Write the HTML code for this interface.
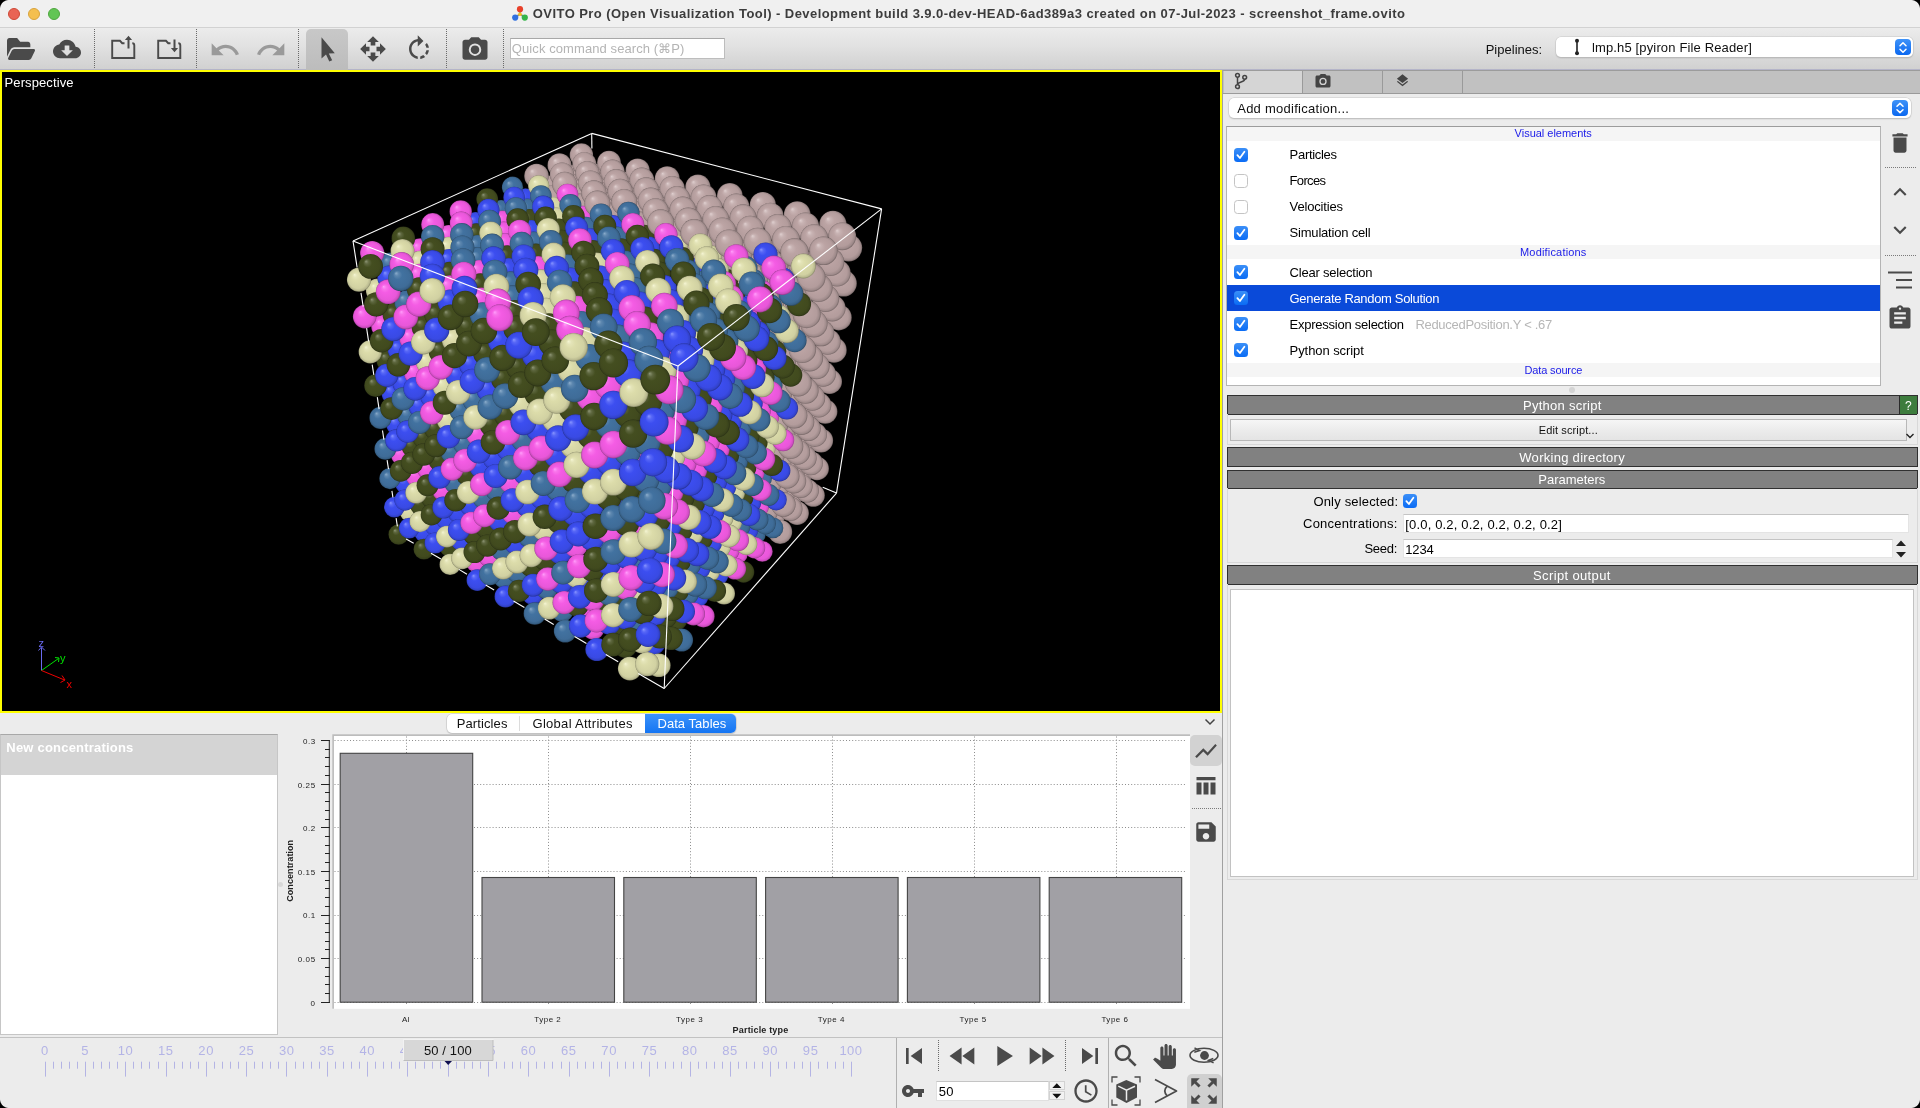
<!DOCTYPE html>
<html><head><meta charset="utf-8"><title>OVITO</title>
<style>
*{box-sizing:border-box;margin:0;padding:0}
html,body{width:1920px;height:1108px;overflow:hidden;background:#ececec;font-family:"Liberation Sans",sans-serif;font-size:13px;color:#000}
.a{position:absolute}
.t{position:absolute;white-space:nowrap;line-height:1}
#titlebar{left:0;top:0;width:1920px;height:28px;background:#f0f0f0;border-bottom:1px solid #d2d2d2}
#toolbar{left:0;top:29px;width:1920px;height:41px;background:linear-gradient(#ebebeb,#e2e2e2 40%,#d0d0d0);}
.vsep{position:absolute;width:1px;background:repeating-linear-gradient(#6a6a6a 0 1px,transparent 1px 2px)}
.hsep{position:absolute;height:1px;background:repeating-linear-gradient(90deg,#7a7a7a 0 1px,transparent 1px 2px)}
#vp{left:0;top:70px;width:1222px;height:643px;background:#000;border:2px solid #ffff00}
.hdr{position:absolute;background:#808080;border:1px solid #3c3c3c;color:#fff;text-align:center;font-size:13px;line-height:17px;height:19px}
.cb{position:absolute;width:14px;height:14px;border-radius:3.5px}
.cb.on{background:linear-gradient(#3b8ff7,#0a6cf5)}
.cb.off{background:#fff;border:1px solid #c4c4c4}
.row{position:absolute;left:1227px;width:653px;height:26px}
.rowt{position:absolute;left:1289px;font-size:13px;line-height:1;white-space:nowrap}
.lh{position:absolute;left:1227px;width:653px;height:14px;background:#f4f4f4;color:#1414e6;font-size:11px;text-align:center;line-height:14px}
</style></head><body>
<div id="wrap" style="position:absolute;left:0;top:0;width:1920px;height:1108px;will-change:transform"><div id="titlebar" class="a"></div>
<div class="a" style="left:8px;top:8px;width:12px;height:12px;border-radius:6px;background:#e96455;border:.5px solid #cf4936"></div>
<div class="a" style="left:28px;top:8px;width:12px;height:12px;border-radius:6px;background:#f4bf4f;border:.5px solid #d9a33c"></div>
<div class="a" style="left:48px;top:8px;width:12px;height:12px;border-radius:6px;background:#61c554;border:.5px solid #4fa73f"></div>
<svg class="a" style="left:511px;top:5px" width="18" height="18" viewBox="0 0 18 18"><path d="M9 9L9 4M9 9L4.2 12.5M9 9L14 12.5" stroke="#888" stroke-width="1.6"/><circle cx="9" cy="4.2" r="3.1" fill="#e8402a"/><circle cx="4.2" cy="12.6" r="3.1" fill="#2f6fe0"/><circle cx="13.8" cy="12.6" r="3.1" fill="#35b54a"/><circle cx="9" cy="9.2" r="1.8" fill="#f0c020"/></svg>
<div id="toolbar" class="a"></div>
<div class="a" style="left:0;top:69px;width:1920px;height:1px;background:#b4b4c8"></div>
<div class="a" style="left:306px;top:29px;width:42px;height:41px;background:linear-gradient(#c8c8c8,#bcbcbc);border-radius:5px 5px 0 0"></div>
<div class="vsep" style="left:94px;top:29px;height:40px"></div>
<div class="vsep" style="left:196px;top:29px;height:40px"></div>
<div class="vsep" style="left:298px;top:29px;height:40px"></div>
<div class="vsep" style="left:446px;top:29px;height:40px"></div>
<div class="vsep" style="left:503px;top:29px;height:40px"></div>
<!-- folder open -->
<svg class="a" style="left:7px;top:38px" width="28" height="22" viewBox="0 64 576 384" preserveAspectRatio="none"><path fill="#4a4a4a" d="M572.694 292.093L500.27 416.248A63.997 63.997 0 0 1 444.989 448H45.025c-18.523 0-30.064-20.093-20.731-36.093l72.424-124.155A64 64 0 0 1 152 256h399.964c18.523 0 30.064 20.093 20.73 36.093zM152 224h328v-48c0-26.51-21.49-48-48-48H272l-64-64H48C21.49 64 0 85.49 0 112v278.046l69.077-118.418C86.214 242.25 117.989 224 152 224z"/></svg>
<!-- cloud download -->
<svg class="a" style="left:53px;top:35px" width="28" height="28" viewBox="0 0 24 24"><path fill="#4a4a4a" d="M19.35 10.04C18.67 6.59 15.64 4 12 4 9.11 4 6.6 5.64 5.35 8.04 2.34 8.36 0 10.91 0 14c0 3.31 2.69 6 6 6h13c2.76 0 5-2.24 5-5 0-2.64-2.05-4.78-4.65-4.96zM17 13l-5 5-5-5h3V9h4v4h3z"/></svg>
<!-- export folder (arrow up) -->
<svg class="a" style="left:110px;top:35px" width="26" height="26" viewBox="0 0 26 26"><path fill="none" stroke="#4a4a4a" stroke-width="1.9" d="M14.5 8.2H12.2L10 5.8H2.2V23H24.3V10.5C24.3 9 23.5 8.2 22.3 8.2"/><path fill="#4a4a4a" d="M17.5 13.5V5h-2.6L18.5 0.8 22.1 5h-2.6v8.5z"/></svg>
<!-- import folder (arrow down) -->
<svg class="a" style="left:156px;top:35px" width="26" height="26" viewBox="0 0 26 26"><path fill="none" stroke="#4a4a4a" stroke-width="1.9" d="M14.5 8.2H12.2L10 5.8H2.2V23H24.3V10.5C24.3 9 23.5 8.2 22.3 8.2"/><path fill="#4a4a4a" d="M17.5 4.5V13h-2.6L18.5 17.2 22.1 13h-2.6V4.5z"/></svg>
<!-- undo / redo -->
<svg class="a" style="left:209px;top:34px" width="32" height="32" viewBox="0 0 24 24"><path fill="#9a9a9a" d="M12.5 8c-2.65 0-5.05.99-6.9 2.6L2 7v9h9l-3.62-3.62c1.39-1.16 3.16-1.88 5.12-1.88 3.54 0 6.55 2.31 7.6 5.5l2.37-.78C21.08 11.03 17.15 8 12.5 8z"/></svg>
<svg class="a" style="left:255px;top:34px" width="32" height="32" viewBox="0 0 24 24"><path fill="#9a9a9a" d="M18.4 10.6C16.55 8.99 14.15 8 11.5 8c-4.65 0-8.58 3.03-9.96 7.22L3.9 16c1.05-3.19 4.05-5.5 7.6-5.5 1.95 0 3.73.72 5.12 1.88L13 16h9V7l-3.6 3.6z"/></svg>
<!-- pointer -->
<svg class="a" style="left:318px;top:36px" width="20" height="26" viewBox="0 0 20 26"><path fill="#4a4a4a" d="M3.5 1.2L16.8 17.2 10.8 17.4 14.2 24.2 11.3 25.6 8 18.6 3.5 22.4z"/></svg>
<!-- move -->
<svg class="a" style="left:359px;top:35px" width="28" height="28" viewBox="0 0 24 24"><path fill="#4a4a4a" d="M10 9h4V6h3l-5-5-5 5h3v3zm-1 1H6V7l-5 5 5 5v-3h3v-4zm14 2l-5-5v3h-3v4h3v3l5-5zm-9 3h-4v3H7l5 5 5-5h-3v-3z"/></svg>
<!-- rotate -->
<svg class="a" style="left:404px;top:34px" width="30" height="30" viewBox="0 0 24 24"><path fill="#4a4a4a" d="M15.55 5.55L11 1v3.07C7.06 4.56 4 7.92 4 12s3.05 7.44 7 7.93v-2.02c-2.84-.48-5-2.94-5-5.910s2.16-5.43 5-5.91V10l4.55-4.45zM19.930 11c-.17-1.39-.72-2.73-1.62-3.890l-1.42 1.420c.54.75.88 1.600 1.020 2.470h2.020zM13 17.900v2.020c1.390-.17 2.740-.71 3.900-1.610l-1.440-1.440c-.75.54-1.590.89-2.460 1.030zm3.890-2.420l1.420 1.410c.9-1.160 1.450-2.500 1.620-3.890h-2.020c-.14.870-.48 1.720-1.020 2.480z"/></svg>
<!-- camera -->
<svg class="a" style="left:460px;top:34px" width="30" height="30" viewBox="0 0 24 24"><path fill="#4a4a4a" d="M9 2.500L7.170 4.500H4c-1.100 0-2 .9-2 2v12c0 1.100.9 2 2 2h16c1.100 0 2-.9 2-2v-12c0-1.100-.9-2-2-2h-3.170L15 2.500H9z"/><circle cx="12" cy="12.500" r="4.200" fill="none" stroke="#e0e0e0" stroke-width="1.600"/></svg>
<!-- quick search -->
<div class="a" style="left:510px;top:38px;width:215px;height:21px;background:#fff;border:1px solid #bdbdbd;border-top-color:#a8a8a8"></div>
<!-- pipelines -->
<div class="a" style="left:1555.5px;top:37px;width:357.5px;height:20px;background:#fff;border-radius:5px;box-shadow:0 0 0 .5px #c8c8c8,0 1px 1.5px rgba(0,0,0,.25)"></div>
<div class="a" style="left:1895px;top:39px;width:16px;height:16px;border-radius:4px;background:linear-gradient(#3f93f8,#0b68f0)"></div>
<svg class="a" style="left:1895px;top:38.5px" width="16" height="17" viewBox="0 0 16 17"><path d="M5 6.800L8 3.800 11 6.800M5 10.200L8 13.200 11 10.200" stroke="#fff" stroke-width="1.500" fill="none" stroke-linecap="round" stroke-linejoin="round"/></svg>
<svg class="a" style="left:1570px;top:38px" width="14" height="18" viewBox="0 0 14 18"><path d="M7 2.500V15.500" stroke="#222" stroke-width="1.600"/><circle cx="7" cy="2.800" r="2" fill="#222"/><circle cx="7" cy="15.300" r="2" fill="#222"/></svg>
<div id="title" class="t" style="left:532.80px;top:7.38px;font-size:13px;color:#3c3c3c;letter-spacing:0.437px;font-weight:bold">OVITO Pro (Open Visualization Tool) - Development build 3.9.0-dev-HEAD-6ad389a3 created on 07-Jul-2023 - screenshot_frame.ovito</div><div id="qs" class="t" style="left:511.80px;top:42.48px;font-size:13px;color:#b4b4b4;letter-spacing:0.090px">Quick command search (⌘P)</div><div id="pl" class="t" style="left:1485.70px;top:43.08px;font-size:13px;color:#111;letter-spacing:0.014px">Pipelines:</div><div id="plt" class="t" style="left:1591.90px;top:41.48px;font-size:13px;color:#111;letter-spacing:0.149px">lmp.h5 [pyiron File Reader]</div><div id="vp" class="a"></div><svg style="position:absolute;left:2px;top:72px" width="1218" height="639" viewBox="2 72 1218 639"><defs><radialGradient id="g0" cx=".5" cy=".5" r=".5" fx=".31" fy=".29"><stop offset="0" stop-color="#dfcfcf"/><stop offset=".16" stop-color="#c8b3b3"/><stop offset=".36" stop-color="#bca4a4"/><stop offset=".8" stop-color="#b39c9c"/><stop offset=".93" stop-color="#9e8a8a"/><stop offset="1" stop-color="#756666"/></radialGradient><radialGradient id="g1" cx=".5" cy=".5" r=".5" fx=".31" fy=".29"><stop offset="0" stop-color="#8895ff"/><stop offset=".16" stop-color="#5767f6"/><stop offset=".36" stop-color="#3c4ef0"/><stop offset=".8" stop-color="#394ae4"/><stop offset=".93" stop-color="#3242ca"/><stop offset="1" stop-color="#253095"/></radialGradient><radialGradient id="g2" cx=".5" cy=".5" r=".5" fx=".31" fy=".29"><stop offset="0" stop-color="#8cadcc"/><stop offset=".16" stop-color="#5d87af"/><stop offset=".36" stop-color="#4272a0"/><stop offset=".8" stop-color="#3f6c98"/><stop offset=".93" stop-color="#376086"/><stop offset="1" stop-color="#294763"/></radialGradient><radialGradient id="g3" cx=".5" cy=".5" r=".5" fx=".31" fy=".29"><stop offset="0" stop-color="#ff9efb"/><stop offset=".16" stop-color="#f974eb"/><stop offset=".36" stop-color="#f45ce4"/><stop offset=".8" stop-color="#e857d9"/><stop offset=".93" stop-color="#cd4dc0"/><stop offset="1" stop-color="#97398d"/></radialGradient><radialGradient id="g4" cx=".5" cy=".5" r=".5" fx=".31" fy=".29"><stop offset="0" stop-color="#8e9575"/><stop offset=".16" stop-color="#5e673f"/><stop offset=".36" stop-color="#444e20"/><stop offset=".8" stop-color="#414a1e"/><stop offset=".93" stop-color="#39421b"/><stop offset="1" stop-color="#2a3014"/></radialGradient><radialGradient id="g5" cx=".5" cy=".5" r=".5" fx=".31" fy=".29"><stop offset="0" stop-color="#f5f5d3"/><stop offset=".16" stop-color="#e4e4b8"/><stop offset=".36" stop-color="#dcdcaa"/><stop offset=".8" stop-color="#d1d1a2"/><stop offset=".93" stop-color="#b9b98f"/><stop offset="1" stop-color="#888869"/></radialGradient></defs><circle cx="813.3" cy="495.3" r="11.5" fill="url(#g0)"/><circle cx="799.9" cy="475.6" r="11.5" fill="url(#g0)"/><circle cx="790.0" cy="497.5" r="11.6" fill="url(#g0)"/><circle cx="595.2" cy="175.3" r="11.7" fill="url(#g0)"/><circle cx="581.4" cy="155.0" r="11.7" fill="url(#g0)"/><circle cx="570.9" cy="176.6" r="11.8" fill="url(#g0)"/><circle cx="817.1" cy="468.5" r="11.8" fill="url(#g0)"/><circle cx="803.4" cy="448.4" r="11.8" fill="url(#g0)"/><circle cx="807.1" cy="490.8" r="11.8" fill="url(#g0)"/><circle cx="793.4" cy="470.6" r="11.8" fill="url(#g0)"/><circle cx="797.1" cy="513.1" r="11.8" fill="url(#g0)"/><circle cx="783.3" cy="493.0" r="11.8" fill="url(#g0)"/><circle cx="773.2" cy="515.5" r="11.8" fill="url(#g0)"/><circle cx="623.1" cy="183.3" r="11.9" fill="url(#g0)"/><circle cx="609.0" cy="162.6" r="11.9" fill="url(#g0)"/><circle cx="598.4" cy="184.6" r="12.0" fill="url(#g0)"/><circle cx="584.3" cy="163.9" r="12.0" fill="url(#g0)"/><circle cx="821.1" cy="440.6" r="12.0" fill="url(#g0)"/><circle cx="573.7" cy="186.0" r="12.0" fill="url(#g0)"/><circle cx="807.2" cy="420.1" r="12.0" fill="url(#g0)"/><circle cx="559.5" cy="165.2" r="12.0" fill="url(#g0)"/><circle cx="810.9" cy="463.3" r="12.0" fill="url(#g0)"/><circle cx="796.9" cy="442.7" r="12.0" fill="url(#g0)"/><circle cx="548.7" cy="187.4" r="12.0" fill="url(#g0)"/><circle cx="800.7" cy="486.0" r="12.0" fill="url(#g0)"/><circle cx="786.7" cy="465.5" r="12.0" fill="url(#g0)"/><circle cx="790.4" cy="508.9" r="12.1" fill="url(#g0)"/><circle cx="776.3" cy="488.3" r="12.1" fill="url(#g0)"/><circle cx="780.1" cy="531.8" r="12.1" fill="url(#g0)"/><circle cx="424.2" cy="532.1" r="10.2" fill="url(#g1)"/><circle cx="766.0" cy="511.2" r="12.1" fill="url(#g0)"/><circle cx="409.7" cy="511.5" r="10.2" fill="url(#g5)"/><circle cx="755.6" cy="534.2" r="10.2" fill="url(#g2)"/><circle cx="398.6" cy="534.5" r="10.2" fill="url(#g4)"/><circle cx="651.9" cy="191.5" r="12.1" fill="url(#g0)"/><circle cx="637.6" cy="170.5" r="12.1" fill="url(#g0)"/><circle cx="626.9" cy="192.9" r="12.2" fill="url(#g0)"/><circle cx="612.5" cy="171.8" r="12.2" fill="url(#g0)"/><circle cx="601.8" cy="194.4" r="12.2" fill="url(#g0)"/><circle cx="587.4" cy="173.2" r="12.2" fill="url(#g0)"/><circle cx="825.2" cy="411.6" r="12.2" fill="url(#g0)"/><circle cx="811.0" cy="390.7" r="12.2" fill="url(#g0)"/><circle cx="576.5" cy="195.8" r="12.2" fill="url(#g0)"/><circle cx="814.8" cy="434.7" r="12.2" fill="url(#g0)"/><circle cx="562.0" cy="174.6" r="12.2" fill="url(#g0)"/><circle cx="800.6" cy="413.7" r="12.3" fill="url(#g0)"/><circle cx="804.4" cy="457.9" r="12.3" fill="url(#g0)"/><circle cx="551.1" cy="197.2" r="12.3" fill="url(#g0)"/><circle cx="790.1" cy="436.9" r="12.3" fill="url(#g0)"/><circle cx="536.5" cy="176.0" r="12.3" fill="url(#g0)"/><circle cx="449.8" cy="546.7" r="10.4" fill="url(#g4)"/><circle cx="793.9" cy="481.1" r="12.3" fill="url(#g0)"/><circle cx="435.2" cy="525.7" r="10.4" fill="url(#g1)"/><circle cx="779.6" cy="460.1" r="12.3" fill="url(#g0)"/><circle cx="525.5" cy="198.7" r="10.4" fill="url(#g1)"/><circle cx="783.4" cy="504.5" r="12.3" fill="url(#g0)"/><circle cx="420.4" cy="504.8" r="10.4" fill="url(#g4)"/><circle cx="423.9" cy="549.2" r="10.4" fill="url(#g4)"/><circle cx="769.1" cy="483.4" r="12.3" fill="url(#g0)"/><circle cx="405.7" cy="483.7" r="10.4" fill="url(#g1)"/><circle cx="772.9" cy="527.9" r="10.4" fill="url(#g2)"/><circle cx="409.2" cy="528.2" r="10.4" fill="url(#g1)"/><circle cx="681.7" cy="200.0" r="12.3" fill="url(#g0)"/><circle cx="758.5" cy="506.8" r="10.4" fill="url(#g3)"/><circle cx="394.4" cy="507.1" r="10.4" fill="url(#g1)"/><circle cx="667.2" cy="178.6" r="12.4" fill="url(#g0)"/><circle cx="762.3" cy="551.4" r="10.4" fill="url(#g3)"/><circle cx="747.8" cy="530.3" r="10.4" fill="url(#g1)"/><circle cx="656.4" cy="201.5" r="12.4" fill="url(#g0)"/><circle cx="641.8" cy="180.0" r="12.4" fill="url(#g0)"/><circle cx="737.2" cy="553.9" r="10.5" fill="url(#g3)"/><circle cx="630.9" cy="203.0" r="12.4" fill="url(#g0)"/><circle cx="616.3" cy="181.5" r="12.4" fill="url(#g0)"/><circle cx="605.3" cy="204.5" r="12.5" fill="url(#g0)"/><circle cx="829.5" cy="381.5" r="12.5" fill="url(#g0)"/><circle cx="590.5" cy="182.9" r="12.5" fill="url(#g0)"/><circle cx="818.9" cy="405.0" r="12.5" fill="url(#g0)"/><circle cx="579.5" cy="206.0" r="12.5" fill="url(#g0)"/><circle cx="564.7" cy="184.3" r="12.5" fill="url(#g0)"/><circle cx="476.4" cy="561.8" r="10.6" fill="url(#g3)"/><circle cx="808.3" cy="428.6" r="12.5" fill="url(#g0)"/><circle cx="461.5" cy="540.5" r="10.6" fill="url(#g1)"/><circle cx="793.7" cy="407.1" r="12.5" fill="url(#g0)"/><circle cx="553.5" cy="207.5" r="10.6" fill="url(#g5)"/><circle cx="446.6" cy="519.1" r="10.6" fill="url(#g1)"/><circle cx="797.6" cy="452.2" r="12.5" fill="url(#g0)"/><circle cx="538.7" cy="185.8" r="10.6" fill="url(#g5)"/><circle cx="450.1" cy="564.4" r="10.6" fill="url(#g5)"/><circle cx="431.6" cy="497.7" r="10.6" fill="url(#g4)"/><circle cx="783.0" cy="430.7" r="12.6" fill="url(#g0)"/><circle cx="435.1" cy="543.0" r="10.6" fill="url(#g1)"/><circle cx="786.9" cy="476.0" r="12.6" fill="url(#g0)"/><circle cx="416.5" cy="476.3" r="10.6" fill="url(#g3)"/><circle cx="527.4" cy="209.0" r="10.6" fill="url(#g2)"/><circle cx="420.1" cy="521.6" r="10.6" fill="url(#g5)"/><circle cx="772.3" cy="454.5" r="12.6" fill="url(#g0)"/><circle cx="401.5" cy="454.8" r="10.6" fill="url(#g3)"/><circle cx="697.9" cy="187.1" r="12.6" fill="url(#g0)"/><circle cx="512.5" cy="187.2" r="10.6" fill="url(#g2)"/><circle cx="776.2" cy="499.8" r="10.6" fill="url(#g1)"/><circle cx="405.0" cy="500.1" r="10.6" fill="url(#g1)"/><circle cx="761.4" cy="478.3" r="10.6" fill="url(#g2)"/><circle cx="389.9" cy="478.6" r="10.6" fill="url(#g2)"/><circle cx="687.0" cy="210.4" r="12.6" fill="url(#g0)"/><circle cx="501.1" cy="210.6" r="10.6" fill="url(#g2)"/><circle cx="765.3" cy="523.8" r="10.6" fill="url(#g2)"/><circle cx="672.2" cy="188.6" r="12.6" fill="url(#g0)"/><circle cx="750.6" cy="502.2" r="10.7" fill="url(#g1)"/><circle cx="754.5" cy="547.8" r="10.7" fill="url(#g3)"/><circle cx="661.1" cy="212.0" r="12.6" fill="url(#g0)"/><circle cx="739.7" cy="526.3" r="10.7" fill="url(#g2)"/><circle cx="646.2" cy="190.0" r="12.7" fill="url(#g0)"/><circle cx="743.6" cy="572.0" r="10.7" fill="url(#g4)"/><circle cx="728.8" cy="550.4" r="10.7" fill="url(#g3)"/><circle cx="635.1" cy="213.5" r="12.7" fill="url(#g0)"/><circle cx="620.1" cy="191.5" r="12.7" fill="url(#g0)"/><circle cx="717.8" cy="574.6" r="10.7" fill="url(#g1)"/><circle cx="834.0" cy="350.1" r="12.7" fill="url(#g0)"/><circle cx="608.9" cy="215.1" r="12.7" fill="url(#g0)"/><circle cx="593.9" cy="193.0" r="12.7" fill="url(#g0)"/><circle cx="504.0" cy="577.4" r="10.8" fill="url(#g2)"/><circle cx="823.2" cy="374.0" r="12.7" fill="url(#g0)"/><circle cx="488.8" cy="555.8" r="10.8" fill="url(#g3)"/><circle cx="582.6" cy="216.6" r="10.8" fill="url(#g3)"/><circle cx="473.6" cy="534.0" r="10.8" fill="url(#g4)"/><circle cx="812.4" cy="398.0" r="12.8" fill="url(#g0)"/><circle cx="567.5" cy="194.5" r="10.8" fill="url(#g3)"/><circle cx="477.3" cy="580.1" r="10.8" fill="url(#g1)"/><circle cx="458.4" cy="512.2" r="10.8" fill="url(#g1)"/><circle cx="797.5" cy="376.1" r="12.8" fill="url(#g0)"/><circle cx="462.1" cy="558.4" r="10.8" fill="url(#g5)"/><circle cx="443.1" cy="490.4" r="10.8" fill="url(#g3)"/><circle cx="801.5" cy="422.1" r="12.8" fill="url(#g0)"/><circle cx="744.8" cy="218.1" r="12.8" fill="url(#g0)"/><circle cx="556.1" cy="218.2" r="10.8" fill="url(#g5)"/><circle cx="446.8" cy="536.6" r="10.8" fill="url(#g5)"/><circle cx="427.8" cy="468.5" r="10.8" fill="url(#g3)"/><circle cx="786.6" cy="400.2" r="12.8" fill="url(#g0)"/><circle cx="729.8" cy="195.9" r="12.8" fill="url(#g0)"/><circle cx="540.9" cy="196.0" r="10.8" fill="url(#g2)"/><circle cx="431.5" cy="514.7" r="10.8" fill="url(#g4)"/><circle cx="790.5" cy="446.3" r="12.8" fill="url(#g0)"/><circle cx="412.5" cy="446.6" r="10.8" fill="url(#g4)"/><circle cx="416.1" cy="492.8" r="10.8" fill="url(#g5)"/><circle cx="775.6" cy="424.3" r="12.8" fill="url(#g0)"/><circle cx="397.1" cy="424.6" r="10.8" fill="url(#g1)"/><circle cx="718.7" cy="219.6" r="12.8" fill="url(#g0)"/><circle cx="529.4" cy="219.8" r="10.8" fill="url(#g4)"/><circle cx="779.6" cy="470.6" r="10.8" fill="url(#g1)"/><circle cx="400.7" cy="470.9" r="10.8" fill="url(#g4)"/><circle cx="703.6" cy="197.4" r="12.9" fill="url(#g0)"/><circle cx="514.1" cy="197.5" r="10.8" fill="url(#g1)"/><circle cx="764.6" cy="448.6" r="10.9" fill="url(#g5)"/><circle cx="385.3" cy="448.9" r="10.9" fill="url(#g2)"/><circle cx="768.5" cy="495.0" r="10.9" fill="url(#g2)"/><circle cx="692.4" cy="221.2" r="12.9" fill="url(#g0)"/><circle cx="502.6" cy="221.4" r="10.9" fill="url(#g3)"/><circle cx="753.5" cy="473.0" r="10.9" fill="url(#g3)"/><circle cx="677.3" cy="198.9" r="12.9" fill="url(#g0)"/><circle cx="487.2" cy="199.1" r="10.9" fill="url(#g4)"/><circle cx="757.5" cy="519.5" r="10.9" fill="url(#g2)"/><circle cx="742.4" cy="497.4" r="10.9" fill="url(#g4)"/><circle cx="666.0" cy="222.8" r="12.9" fill="url(#g0)"/><circle cx="475.6" cy="223.0" r="10.9" fill="url(#g1)"/><circle cx="746.4" cy="544.1" r="10.9" fill="url(#g5)"/><circle cx="650.8" cy="200.5" r="12.9" fill="url(#g0)"/><circle cx="559.6" cy="590.9" r="10.9" fill="url(#g4)"/><circle cx="731.2" cy="522.0" r="10.9" fill="url(#g5)"/><circle cx="735.2" cy="568.7" r="10.9" fill="url(#g3)"/><circle cx="639.5" cy="224.5" r="13.0" fill="url(#g0)"/><circle cx="720.0" cy="546.7" r="10.9" fill="url(#g5)"/><circle cx="624.2" cy="202.0" r="13.0" fill="url(#g0)"/><circle cx="724.0" cy="593.5" r="11.0" fill="url(#g5)"/><circle cx="532.6" cy="593.7" r="11.0" fill="url(#g1)"/><circle cx="838.7" cy="317.4" r="13.0" fill="url(#g0)"/><circle cx="708.8" cy="571.5" r="11.0" fill="url(#g5)"/><circle cx="517.2" cy="571.6" r="11.0" fill="url(#g2)"/><circle cx="612.7" cy="226.1" r="11.0" fill="url(#g1)"/><circle cx="501.7" cy="549.5" r="11.0" fill="url(#g2)"/><circle cx="827.7" cy="341.8" r="13.0" fill="url(#g0)"/><circle cx="597.4" cy="203.6" r="13.0" fill="url(#g0)"/><circle cx="697.5" cy="596.3" r="11.0" fill="url(#g1)"/><circle cx="505.5" cy="596.5" r="11.0" fill="url(#g1)"/><circle cx="486.2" cy="527.3" r="11.0" fill="url(#g4)"/><circle cx="490.0" cy="574.3" r="11.0" fill="url(#g2)"/><circle cx="470.7" cy="505.1" r="11.0" fill="url(#g1)"/><circle cx="816.6" cy="366.2" r="13.0" fill="url(#g0)"/><circle cx="585.8" cy="227.7" r="11.0" fill="url(#g2)"/><circle cx="474.5" cy="552.1" r="11.0" fill="url(#g4)"/><circle cx="455.2" cy="482.8" r="11.0" fill="url(#g2)"/><circle cx="801.4" cy="343.8" r="13.1" fill="url(#g0)"/><circle cx="762.8" cy="205.0" r="13.1" fill="url(#g0)"/><circle cx="570.4" cy="205.1" r="11.0" fill="url(#g2)"/><circle cx="458.9" cy="529.9" r="11.0" fill="url(#g1)"/><circle cx="439.6" cy="460.5" r="11.0" fill="url(#g4)"/><circle cx="805.5" cy="390.7" r="13.1" fill="url(#g0)"/><circle cx="443.3" cy="507.6" r="11.0" fill="url(#g1)"/><circle cx="423.9" cy="438.1" r="11.0" fill="url(#g4)"/><circle cx="790.2" cy="368.3" r="13.1" fill="url(#g0)"/><circle cx="558.7" cy="229.4" r="11.0" fill="url(#g4)"/><circle cx="427.6" cy="485.3" r="11.0" fill="url(#g4)"/><circle cx="794.3" cy="415.4" r="13.1" fill="url(#g0)"/><circle cx="408.3" cy="415.7" r="11.0" fill="url(#g2)"/><circle cx="775.0" cy="345.8" r="13.1" fill="url(#g0)"/><circle cx="736.3" cy="206.6" r="13.1" fill="url(#g0)"/><circle cx="543.2" cy="206.7" r="11.1" fill="url(#g1)"/><circle cx="412.0" cy="462.9" r="11.1" fill="url(#g4)"/><circle cx="779.0" cy="392.9" r="13.1" fill="url(#g0)"/><circle cx="392.6" cy="393.2" r="11.1" fill="url(#g1)"/><circle cx="783.1" cy="440.1" r="11.1" fill="url(#g3)"/><circle cx="396.3" cy="440.4" r="11.1" fill="url(#g1)"/><circle cx="725.0" cy="230.9" r="13.1" fill="url(#g0)"/><circle cx="531.5" cy="231.0" r="11.1" fill="url(#g1)"/><circle cx="767.8" cy="417.6" r="11.1" fill="url(#g3)"/><circle cx="380.5" cy="417.9" r="11.1" fill="url(#g2)"/><circle cx="709.6" cy="208.2" r="13.1" fill="url(#g0)"/><circle cx="515.9" cy="208.3" r="11.1" fill="url(#g2)"/><circle cx="771.9" cy="465.0" r="11.1" fill="url(#g4)"/><circle cx="756.5" cy="442.5" r="11.1" fill="url(#g4)"/><circle cx="698.2" cy="232.6" r="13.2" fill="url(#g0)"/><circle cx="504.0" cy="232.7" r="11.1" fill="url(#g3)"/><circle cx="760.6" cy="489.9" r="11.1" fill="url(#g3)"/><circle cx="682.7" cy="209.8" r="13.2" fill="url(#g0)"/><circle cx="488.4" cy="209.9" r="11.1" fill="url(#g1)"/><circle cx="589.7" cy="607.7" r="11.1" fill="url(#g3)"/><circle cx="745.2" cy="467.4" r="11.1" fill="url(#g4)"/><circle cx="686.7" cy="257.1" r="13.2" fill="url(#g0)"/><circle cx="574.1" cy="585.3" r="11.1" fill="url(#g1)"/><circle cx="749.2" cy="515.0" r="11.1" fill="url(#g1)"/><circle cx="671.2" cy="234.2" r="13.2" fill="url(#g0)"/><circle cx="476.4" cy="234.4" r="11.1" fill="url(#g4)"/><circle cx="733.8" cy="492.4" r="11.2" fill="url(#g5)"/><circle cx="655.6" cy="211.4" r="13.2" fill="url(#g0)"/><circle cx="460.7" cy="211.5" r="11.2" fill="url(#g3)"/><circle cx="562.3" cy="610.6" r="11.2" fill="url(#g2)"/><circle cx="737.8" cy="540.1" r="11.2" fill="url(#g3)"/><circle cx="546.7" cy="588.1" r="11.2" fill="url(#g2)"/><circle cx="722.3" cy="517.5" r="11.2" fill="url(#g5)"/><circle cx="644.0" cy="235.9" r="11.2" fill="url(#g4)"/><circle cx="448.7" cy="236.1" r="11.2" fill="url(#g3)"/><circle cx="726.4" cy="565.4" r="11.2" fill="url(#g5)"/><circle cx="530.9" cy="565.5" r="11.2" fill="url(#g4)"/><circle cx="843.5" cy="283.3" r="13.3" fill="url(#g0)"/><circle cx="628.4" cy="213.0" r="11.2" fill="url(#g2)"/><circle cx="534.8" cy="613.5" r="11.2" fill="url(#g2)"/><circle cx="710.8" cy="542.8" r="11.2" fill="url(#g1)"/><circle cx="515.2" cy="542.9" r="11.2" fill="url(#g1)"/><circle cx="714.9" cy="590.7" r="11.2" fill="url(#g4)"/><circle cx="519.0" cy="590.9" r="11.2" fill="url(#g4)"/><circle cx="499.4" cy="520.3" r="11.2" fill="url(#g1)"/><circle cx="832.3" cy="308.1" r="13.3" fill="url(#g0)"/><circle cx="616.7" cy="237.6" r="11.2" fill="url(#g2)"/><circle cx="699.3" cy="568.1" r="11.2" fill="url(#g1)"/><circle cx="503.2" cy="568.3" r="11.2" fill="url(#g5)"/><circle cx="483.5" cy="497.6" r="11.2" fill="url(#g2)"/><circle cx="797.2" cy="214.5" r="13.3" fill="url(#g0)"/><circle cx="601.0" cy="214.6" r="11.2" fill="url(#g2)"/><circle cx="703.4" cy="616.2" r="11.2" fill="url(#g3)"/><circle cx="487.4" cy="545.6" r="11.2" fill="url(#g4)"/><circle cx="467.7" cy="474.9" r="11.2" fill="url(#g4)"/><circle cx="821.0" cy="333.0" r="13.3" fill="url(#g0)"/><circle cx="687.7" cy="593.6" r="11.2" fill="url(#g2)"/><circle cx="471.5" cy="522.9" r="11.2" fill="url(#g3)"/><circle cx="451.8" cy="452.1" r="11.3" fill="url(#g2)"/><circle cx="589.2" cy="239.3" r="11.3" fill="url(#g1)"/><circle cx="455.6" cy="500.2" r="11.3" fill="url(#g4)"/><circle cx="435.8" cy="429.3" r="11.3" fill="url(#g4)"/><circle cx="809.7" cy="358.0" r="13.4" fill="url(#g0)"/><circle cx="770.2" cy="216.1" r="13.4" fill="url(#g0)"/><circle cx="573.4" cy="216.2" r="11.3" fill="url(#g4)"/><circle cx="676.1" cy="619.2" r="11.3" fill="url(#g4)"/><circle cx="439.6" cy="477.4" r="11.3" fill="url(#g1)"/><circle cx="419.9" cy="406.4" r="11.3" fill="url(#g1)"/><circle cx="794.1" cy="335.0" r="13.4" fill="url(#g0)"/><circle cx="423.7" cy="454.5" r="11.3" fill="url(#g4)"/><circle cx="798.3" cy="383.1" r="13.4" fill="url(#g0)"/><circle cx="403.9" cy="383.4" r="11.3" fill="url(#g1)"/><circle cx="778.5" cy="312.0" r="13.4" fill="url(#g0)"/><circle cx="561.5" cy="241.1" r="11.3" fill="url(#g4)"/><circle cx="407.6" cy="431.6" r="11.3" fill="url(#g1)"/><circle cx="782.7" cy="360.1" r="13.4" fill="url(#g0)"/><circle cx="387.8" cy="360.4" r="11.3" fill="url(#g4)"/><circle cx="762.9" cy="288.9" r="13.4" fill="url(#g0)"/><circle cx="743.1" cy="217.7" r="13.4" fill="url(#g0)"/><circle cx="545.6" cy="217.9" r="11.3" fill="url(#g4)"/><circle cx="786.8" cy="408.3" r="11.3" fill="url(#g1)"/><circle cx="391.6" cy="408.6" r="11.3" fill="url(#g4)"/><circle cx="767.0" cy="337.1" r="13.4" fill="url(#g0)"/><circle cx="747.2" cy="265.8" r="13.4" fill="url(#g0)"/><circle cx="771.2" cy="385.3" r="11.3" fill="url(#g2)"/><circle cx="375.5" cy="385.6" r="11.3" fill="url(#g4)"/><circle cx="731.5" cy="242.6" r="13.4" fill="url(#g0)"/><circle cx="533.6" cy="242.8" r="11.3" fill="url(#g2)"/><circle cx="775.3" cy="433.6" r="11.3" fill="url(#g5)"/><circle cx="735.7" cy="290.8" r="13.4" fill="url(#g0)"/><circle cx="715.8" cy="219.4" r="13.4" fill="url(#g0)"/><circle cx="517.7" cy="219.6" r="11.3" fill="url(#g4)"/><circle cx="621.0" cy="625.1" r="11.3" fill="url(#g4)"/><circle cx="759.6" cy="410.6" r="11.3" fill="url(#g3)"/><circle cx="719.9" cy="267.6" r="13.5" fill="url(#g0)"/><circle cx="605.1" cy="602.3" r="11.4" fill="url(#g4)"/><circle cx="763.8" cy="459.1" r="11.4" fill="url(#g3)"/><circle cx="704.1" cy="244.4" r="13.5" fill="url(#g0)"/><circle cx="505.6" cy="244.5" r="11.4" fill="url(#g3)"/><circle cx="589.2" cy="579.4" r="11.4" fill="url(#g1)"/><circle cx="748.1" cy="436.0" r="11.4" fill="url(#g4)"/><circle cx="688.3" cy="221.1" r="13.5" fill="url(#g0)"/><circle cx="489.6" cy="221.2" r="11.4" fill="url(#g2)"/><circle cx="593.2" cy="628.1" r="11.4" fill="url(#g3)"/><circle cx="752.2" cy="484.6" r="11.4" fill="url(#g2)"/><circle cx="692.4" cy="269.5" r="11.4" fill="url(#g1)"/><circle cx="577.3" cy="605.2" r="11.4" fill="url(#g4)"/><circle cx="736.4" cy="461.5" r="11.4" fill="url(#g2)"/><circle cx="676.6" cy="246.1" r="11.4" fill="url(#g5)"/><circle cx="477.4" cy="246.3" r="11.4" fill="url(#g2)"/><circle cx="561.3" cy="582.2" r="11.4" fill="url(#g1)"/><circle cx="740.6" cy="510.2" r="11.4" fill="url(#g2)"/><circle cx="660.7" cy="222.8" r="13.5" fill="url(#g0)"/><circle cx="461.2" cy="222.9" r="11.4" fill="url(#g3)"/><circle cx="565.2" cy="631.1" r="11.4" fill="url(#g2)"/><circle cx="545.2" cy="559.2" r="11.4" fill="url(#g4)"/><circle cx="724.7" cy="487.1" r="11.4" fill="url(#g1)"/><circle cx="549.2" cy="608.1" r="11.4" fill="url(#g5)"/><circle cx="728.9" cy="536.0" r="11.4" fill="url(#g5)"/><circle cx="529.2" cy="536.1" r="11.4" fill="url(#g2)"/><circle cx="848.6" cy="247.8" r="13.6" fill="url(#g0)"/><circle cx="648.8" cy="247.9" r="11.4" fill="url(#g1)"/><circle cx="448.9" cy="248.1" r="11.4" fill="url(#g5)"/><circle cx="533.1" cy="585.1" r="11.4" fill="url(#g1)"/><circle cx="713.0" cy="512.9" r="11.4" fill="url(#g1)"/><circle cx="513.0" cy="513.0" r="11.4" fill="url(#g3)"/><circle cx="832.9" cy="224.3" r="13.6" fill="url(#g0)"/><circle cx="632.8" cy="224.5" r="11.5" fill="url(#g3)"/><circle cx="432.7" cy="224.6" r="11.5" fill="url(#g3)"/><circle cx="717.2" cy="561.8" r="11.5" fill="url(#g2)"/><circle cx="517.0" cy="562.0" r="11.5" fill="url(#g5)"/><circle cx="496.9" cy="489.9" r="11.5" fill="url(#g2)"/><circle cx="837.1" cy="273.0" r="13.6" fill="url(#g0)"/><circle cx="701.2" cy="538.7" r="11.5" fill="url(#g4)"/><circle cx="500.8" cy="538.9" r="11.5" fill="url(#g4)"/><circle cx="480.7" cy="466.6" r="11.5" fill="url(#g1)"/><circle cx="620.8" cy="249.7" r="11.5" fill="url(#g4)"/><circle cx="420.3" cy="249.8" r="11.5" fill="url(#g3)"/><circle cx="705.4" cy="587.8" r="11.5" fill="url(#g2)"/><circle cx="484.6" cy="515.7" r="11.5" fill="url(#g3)"/><circle cx="464.5" cy="443.4" r="11.5" fill="url(#g2)"/><circle cx="825.6" cy="298.4" r="13.6" fill="url(#g0)"/><circle cx="805.5" cy="226.0" r="13.6" fill="url(#g0)"/><circle cx="604.8" cy="226.2" r="11.5" fill="url(#g4)"/><circle cx="689.4" cy="564.7" r="11.5" fill="url(#g2)"/><circle cx="468.4" cy="492.4" r="11.5" fill="url(#g5)"/><circle cx="448.2" cy="420.0" r="11.5" fill="url(#g5)"/><circle cx="809.8" cy="274.9" r="13.6" fill="url(#g0)"/><circle cx="693.5" cy="613.9" r="11.5" fill="url(#g3)"/><circle cx="452.1" cy="469.1" r="11.5" fill="url(#g3)"/><circle cx="431.9" cy="396.7" r="11.5" fill="url(#g1)"/><circle cx="814.0" cy="323.8" r="13.6" fill="url(#g0)"/><circle cx="592.7" cy="251.5" r="11.5" fill="url(#g4)"/><circle cx="677.5" cy="590.7" r="11.5" fill="url(#g4)"/><circle cx="435.8" cy="445.8" r="11.5" fill="url(#g4)"/><circle cx="415.6" cy="373.2" r="11.5" fill="url(#g3)"/><circle cx="798.1" cy="300.3" r="13.7" fill="url(#g0)"/><circle cx="778.0" cy="227.7" r="13.7" fill="url(#g0)"/><circle cx="576.6" cy="227.9" r="11.5" fill="url(#g1)"/><circle cx="681.6" cy="640.1" r="11.5" fill="url(#g2)"/><circle cx="419.5" cy="422.4" r="11.5" fill="url(#g2)"/><circle cx="802.4" cy="349.4" r="13.7" fill="url(#g0)"/><circle cx="399.2" cy="349.7" r="11.5" fill="url(#g1)"/><circle cx="782.2" cy="276.7" r="13.7" fill="url(#g0)"/><circle cx="665.6" cy="616.9" r="11.5" fill="url(#g4)"/><circle cx="403.1" cy="398.9" r="11.6" fill="url(#g2)"/><circle cx="786.4" cy="325.9" r="13.7" fill="url(#g0)"/><circle cx="382.8" cy="326.2" r="11.6" fill="url(#g3)"/><circle cx="766.2" cy="253.1" r="13.7" fill="url(#g0)"/><circle cx="564.4" cy="253.3" r="11.6" fill="url(#g4)"/><circle cx="790.7" cy="375.1" r="11.6" fill="url(#g4)"/><circle cx="386.7" cy="375.4" r="11.6" fill="url(#g1)"/><circle cx="770.5" cy="302.3" r="13.7" fill="url(#g0)"/><circle cx="750.2" cy="229.4" r="13.7" fill="url(#g0)"/><circle cx="548.2" cy="229.6" r="11.6" fill="url(#g5)"/><circle cx="653.6" cy="643.2" r="11.6" fill="url(#g1)"/><circle cx="774.7" cy="351.6" r="11.6" fill="url(#g4)"/><circle cx="370.2" cy="351.9" r="11.6" fill="url(#g5)"/><circle cx="754.5" cy="278.6" r="13.7" fill="url(#g0)"/><circle cx="637.4" cy="619.9" r="11.6" fill="url(#g2)"/><circle cx="779.0" cy="400.9" r="11.6" fill="url(#g2)"/><circle cx="758.7" cy="327.9" r="11.6" fill="url(#g4)"/><circle cx="738.4" cy="254.9" r="13.7" fill="url(#g0)"/><circle cx="535.9" cy="255.1" r="11.6" fill="url(#g4)"/><circle cx="621.2" cy="596.6" r="11.6" fill="url(#g4)"/><circle cx="762.9" cy="377.3" r="11.6" fill="url(#g4)"/><circle cx="742.6" cy="304.3" r="11.6" fill="url(#g1)"/><circle cx="722.3" cy="231.2" r="13.8" fill="url(#g0)"/><circle cx="519.6" cy="231.3" r="11.6" fill="url(#g3)"/><circle cx="625.3" cy="646.3" r="11.6" fill="url(#g4)"/><circle cx="605.0" cy="573.2" r="11.6" fill="url(#g1)"/><circle cx="767.2" cy="426.8" r="11.6" fill="url(#g5)"/><circle cx="726.5" cy="280.5" r="11.6" fill="url(#g4)"/><circle cx="609.1" cy="623.0" r="11.6" fill="url(#g1)"/><circle cx="751.1" cy="403.2" r="11.6" fill="url(#g1)"/><circle cx="710.4" cy="256.8" r="11.6" fill="url(#g5)"/><circle cx="507.2" cy="256.9" r="11.6" fill="url(#g4)"/><circle cx="592.8" cy="599.6" r="11.6" fill="url(#g3)"/><circle cx="755.3" cy="452.9" r="11.6" fill="url(#g2)"/><circle cx="694.2" cy="232.9" r="13.8" fill="url(#g0)"/><circle cx="490.8" cy="233.1" r="11.6" fill="url(#g5)"/><circle cx="596.9" cy="649.5" r="11.6" fill="url(#g1)"/><circle cx="576.5" cy="576.1" r="11.6" fill="url(#g5)"/><circle cx="739.2" cy="429.2" r="11.7" fill="url(#g2)"/><circle cx="698.4" cy="282.5" r="11.7" fill="url(#g2)"/><circle cx="580.6" cy="626.0" r="11.7" fill="url(#g1)"/><circle cx="560.1" cy="552.6" r="11.7" fill="url(#g1)"/><circle cx="743.5" cy="479.0" r="11.7" fill="url(#g5)"/><circle cx="682.2" cy="258.6" r="11.7" fill="url(#g4)"/><circle cx="478.3" cy="258.8" r="11.7" fill="url(#g2)"/><circle cx="564.2" cy="602.6" r="11.7" fill="url(#g3)"/><circle cx="543.7" cy="529.1" r="11.7" fill="url(#g5)"/><circle cx="727.3" cy="455.4" r="11.7" fill="url(#g4)"/><circle cx="665.9" cy="234.7" r="11.7" fill="url(#g3)"/><circle cx="461.8" cy="234.8" r="11.7" fill="url(#g2)"/><circle cx="547.8" cy="579.0" r="11.7" fill="url(#g3)"/><circle cx="731.5" cy="505.3" r="11.7" fill="url(#g2)"/><circle cx="527.3" cy="505.4" r="11.7" fill="url(#g1)"/><circle cx="531.3" cy="555.5" r="11.7" fill="url(#g5)"/><circle cx="715.3" cy="481.6" r="11.7" fill="url(#g1)"/><circle cx="510.8" cy="481.8" r="11.7" fill="url(#g3)"/><circle cx="653.8" cy="260.5" r="11.7" fill="url(#g4)"/><circle cx="449.3" cy="260.6" r="11.7" fill="url(#g1)"/><circle cx="719.5" cy="531.6" r="11.7" fill="url(#g3)"/><circle cx="514.8" cy="531.8" r="11.7" fill="url(#g4)"/><circle cx="494.3" cy="458.0" r="11.7" fill="url(#g1)"/><circle cx="842.2" cy="236.3" r="13.9" fill="url(#g0)"/><circle cx="637.4" cy="236.5" r="11.7" fill="url(#g4)"/><circle cx="432.7" cy="236.6" r="11.7" fill="url(#g2)"/><circle cx="703.2" cy="508.0" r="11.7" fill="url(#g1)"/><circle cx="498.3" cy="508.1" r="11.7" fill="url(#g4)"/><circle cx="477.8" cy="434.3" r="11.7" fill="url(#g3)"/><circle cx="707.5" cy="558.1" r="11.7" fill="url(#g2)"/><circle cx="481.8" cy="484.4" r="11.7" fill="url(#g3)"/><circle cx="461.2" cy="410.4" r="11.7" fill="url(#g2)"/><circle cx="830.4" cy="262.2" r="13.9" fill="url(#g0)"/><circle cx="625.2" cy="262.3" r="11.7" fill="url(#g2)"/><circle cx="420.0" cy="262.5" r="11.7" fill="url(#g5)"/><circle cx="691.1" cy="534.4" r="11.8" fill="url(#g5)"/><circle cx="465.2" cy="460.6" r="11.8" fill="url(#g3)"/><circle cx="444.5" cy="386.5" r="11.8" fill="url(#g5)"/><circle cx="814.2" cy="238.1" r="13.9" fill="url(#g0)"/><circle cx="608.8" cy="238.2" r="11.8" fill="url(#g2)"/><circle cx="403.3" cy="238.4" r="11.8" fill="url(#g4)"/><circle cx="695.4" cy="584.8" r="11.8" fill="url(#g2)"/><circle cx="448.5" cy="436.7" r="11.8" fill="url(#g1)"/><circle cx="427.9" cy="362.6" r="11.8" fill="url(#g5)"/><circle cx="818.6" cy="288.1" r="14.0" fill="url(#g0)"/><circle cx="679.0" cy="561.0" r="11.8" fill="url(#g4)"/><circle cx="431.8" cy="412.8" r="11.8" fill="url(#g3)"/><circle cx="411.2" cy="338.6" r="11.8" fill="url(#g3)"/><circle cx="802.3" cy="264.0" r="14.0" fill="url(#g0)"/><circle cx="596.4" cy="264.2" r="11.8" fill="url(#g5)"/><circle cx="390.5" cy="264.3" r="11.8" fill="url(#g2)"/><circle cx="683.2" cy="611.5" r="11.8" fill="url(#g1)"/><circle cx="415.1" cy="388.8" r="11.8" fill="url(#g1)"/><circle cx="806.7" cy="314.2" r="14.0" fill="url(#g0)"/><circle cx="394.4" cy="314.5" r="11.8" fill="url(#g4)"/><circle cx="786.0" cy="239.9" r="14.0" fill="url(#g0)"/><circle cx="579.9" cy="240.0" r="11.8" fill="url(#g3)"/><circle cx="666.8" cy="587.7" r="11.8" fill="url(#g2)"/><circle cx="398.4" cy="364.8" r="11.8" fill="url(#g4)"/><circle cx="790.4" cy="290.1" r="14.0" fill="url(#g0)"/><circle cx="377.7" cy="290.4" r="11.8" fill="url(#g5)"/><circle cx="671.0" cy="638.3" r="11.8" fill="url(#g4)"/><circle cx="794.8" cy="340.4" r="11.8" fill="url(#g2)"/><circle cx="381.6" cy="340.7" r="11.8" fill="url(#g4)"/><circle cx="774.1" cy="265.9" r="14.0" fill="url(#g0)"/><circle cx="567.5" cy="266.1" r="11.8" fill="url(#g2)"/><circle cx="654.5" cy="614.5" r="11.8" fill="url(#g1)"/><circle cx="778.4" cy="316.3" r="11.8" fill="url(#g5)"/><circle cx="364.7" cy="316.6" r="11.8" fill="url(#g3)"/><circle cx="757.7" cy="241.7" r="14.0" fill="url(#g0)"/><circle cx="550.8" cy="241.9" r="11.8" fill="url(#g2)"/><circle cx="658.8" cy="665.3" r="11.8" fill="url(#g5)"/><circle cx="638.0" cy="590.7" r="11.8" fill="url(#g5)"/><circle cx="782.8" cy="366.7" r="11.9" fill="url(#g4)"/><circle cx="762.0" cy="292.1" r="11.9" fill="url(#g3)"/><circle cx="642.2" cy="641.5" r="11.9" fill="url(#g5)"/><circle cx="621.4" cy="566.8" r="11.9" fill="url(#g3)"/><circle cx="766.4" cy="342.6" r="11.9" fill="url(#g2)"/><circle cx="745.6" cy="267.8" r="11.9" fill="url(#g2)"/><circle cx="538.3" cy="268.0" r="11.9" fill="url(#g3)"/><circle cx="625.6" cy="617.6" r="11.9" fill="url(#g1)"/><circle cx="604.8" cy="542.9" r="11.9" fill="url(#g2)"/><circle cx="770.7" cy="393.1" r="11.9" fill="url(#g3)"/><circle cx="749.9" cy="318.3" r="11.9" fill="url(#g3)"/><circle cx="729.1" cy="243.5" r="14.1" fill="url(#g0)"/><circle cx="521.6" cy="243.7" r="11.9" fill="url(#g2)"/><circle cx="629.8" cy="668.6" r="11.9" fill="url(#g5)"/><circle cx="609.0" cy="593.7" r="11.9" fill="url(#g2)"/><circle cx="754.3" cy="369.0" r="11.9" fill="url(#g3)"/><circle cx="733.4" cy="294.1" r="11.9" fill="url(#g4)"/><circle cx="613.2" cy="644.7" r="11.9" fill="url(#g4)"/><circle cx="592.4" cy="569.8" r="11.9" fill="url(#g4)"/><circle cx="758.6" cy="419.7" r="11.9" fill="url(#g2)"/><circle cx="716.9" cy="269.7" r="11.9" fill="url(#g5)"/><circle cx="508.9" cy="269.9" r="11.9" fill="url(#g1)"/><circle cx="596.5" cy="620.7" r="11.9" fill="url(#g3)"/><circle cx="575.7" cy="545.7" r="11.9" fill="url(#g3)"/><circle cx="742.1" cy="395.5" r="11.9" fill="url(#g4)"/><circle cx="700.4" cy="245.3" r="11.9" fill="url(#g5)"/><circle cx="492.1" cy="245.5" r="11.9" fill="url(#g2)"/><circle cx="579.8" cy="596.8" r="11.9" fill="url(#g1)"/><circle cx="558.9" cy="521.7" r="11.9" fill="url(#g4)"/><circle cx="746.5" cy="446.4" r="11.9" fill="url(#g2)"/><circle cx="704.7" cy="296.1" r="11.9" fill="url(#g1)"/><circle cx="563.1" cy="572.7" r="11.9" fill="url(#g2)"/><circle cx="542.2" cy="497.5" r="11.9" fill="url(#g1)"/><circle cx="729.9" cy="422.1" r="11.9" fill="url(#g1)"/><circle cx="688.1" cy="271.7" r="11.9" fill="url(#g2)"/><circle cx="479.3" cy="271.8" r="11.9" fill="url(#g3)"/><circle cx="546.3" cy="548.6" r="12.0" fill="url(#g3)"/><circle cx="734.3" cy="473.2" r="12.0" fill="url(#g2)"/><circle cx="525.4" cy="473.3" r="12.0" fill="url(#g1)"/><circle cx="671.4" cy="247.2" r="12.0" fill="url(#g1)"/><circle cx="462.4" cy="247.4" r="12.0" fill="url(#g2)"/><circle cx="529.5" cy="524.5" r="12.0" fill="url(#g5)"/><circle cx="717.7" cy="448.9" r="12.0" fill="url(#g3)"/><circle cx="508.5" cy="449.1" r="12.0" fill="url(#g1)"/><circle cx="675.7" cy="298.1" r="12.0" fill="url(#g4)"/><circle cx="722.0" cy="500.1" r="12.0" fill="url(#g5)"/><circle cx="512.6" cy="500.2" r="12.0" fill="url(#g1)"/><circle cx="491.6" cy="424.8" r="12.0" fill="url(#g4)"/><circle cx="659.0" cy="273.6" r="12.0" fill="url(#g4)"/><circle cx="449.6" cy="273.8" r="12.0" fill="url(#g4)"/><circle cx="705.3" cy="475.8" r="12.0" fill="url(#g4)"/><circle cx="495.7" cy="476.0" r="12.0" fill="url(#g1)"/><circle cx="474.7" cy="400.4" r="12.0" fill="url(#g2)"/><circle cx="642.3" cy="249.0" r="12.0" fill="url(#g1)"/><circle cx="432.6" cy="249.2" r="12.0" fill="url(#g4)"/><circle cx="709.7" cy="527.1" r="12.0" fill="url(#g1)"/><circle cx="478.8" cy="451.6" r="12.0" fill="url(#g1)"/><circle cx="457.7" cy="376.0" r="12.0" fill="url(#g1)"/><circle cx="693.0" cy="502.8" r="12.0" fill="url(#g4)"/><circle cx="461.8" cy="427.2" r="12.0" fill="url(#g2)"/><circle cx="440.7" cy="351.5" r="12.0" fill="url(#g4)"/><circle cx="629.8" cy="275.6" r="12.0" fill="url(#g2)"/><circle cx="419.6" cy="275.7" r="12.0" fill="url(#g3)"/><circle cx="697.3" cy="554.2" r="12.0" fill="url(#g1)"/><circle cx="444.7" cy="402.8" r="12.0" fill="url(#g4)"/><circle cx="423.6" cy="326.9" r="12.0" fill="url(#g4)"/><circle cx="823.4" cy="250.8" r="14.3" fill="url(#g0)"/><circle cx="612.9" cy="250.9" r="12.0" fill="url(#g1)"/><circle cx="402.5" cy="251.1" r="12.0" fill="url(#g5)"/><circle cx="680.5" cy="529.9" r="12.1" fill="url(#g4)"/><circle cx="427.7" cy="378.3" r="12.1" fill="url(#g3)"/><circle cx="406.5" cy="302.3" r="12.1" fill="url(#g2)"/><circle cx="684.9" cy="581.5" r="12.1" fill="url(#g5)"/><circle cx="410.6" cy="353.7" r="12.1" fill="url(#g1)"/><circle cx="811.2" cy="277.4" r="14.3" fill="url(#g0)"/><circle cx="600.3" cy="277.5" r="12.1" fill="url(#g1)"/><circle cx="389.4" cy="277.7" r="12.1" fill="url(#g1)"/><circle cx="668.1" cy="557.2" r="12.1" fill="url(#g1)"/><circle cx="393.4" cy="329.1" r="12.1" fill="url(#g1)"/><circle cx="794.5" cy="252.6" r="14.3" fill="url(#g0)"/><circle cx="583.4" cy="252.8" r="12.1" fill="url(#g4)"/><circle cx="372.2" cy="253.0" r="12.1" fill="url(#g3)"/><circle cx="672.4" cy="608.9" r="12.1" fill="url(#g4)"/><circle cx="799.0" cy="304.1" r="12.1" fill="url(#g4)"/><circle cx="376.2" cy="304.4" r="12.1" fill="url(#g4)"/><circle cx="655.5" cy="584.6" r="12.1" fill="url(#g1)"/><circle cx="782.3" cy="279.3" r="12.1" fill="url(#g1)"/><circle cx="570.6" cy="279.5" r="12.1" fill="url(#g1)"/><circle cx="359.0" cy="279.7" r="12.1" fill="url(#g5)"/><circle cx="659.8" cy="636.5" r="12.1" fill="url(#g4)"/><circle cx="638.6" cy="560.1" r="12.1" fill="url(#g2)"/><circle cx="786.7" cy="330.9" r="12.1" fill="url(#g5)"/><circle cx="765.5" cy="254.5" r="12.1" fill="url(#g1)"/><circle cx="553.6" cy="254.7" r="12.1" fill="url(#g5)"/><circle cx="642.9" cy="612.1" r="12.1" fill="url(#g4)"/><circle cx="621.7" cy="535.7" r="12.1" fill="url(#g1)"/><circle cx="770.0" cy="306.2" r="12.1" fill="url(#g2)"/><circle cx="647.2" cy="664.1" r="12.1" fill="url(#g5)"/><circle cx="626.0" cy="587.6" r="12.2" fill="url(#g3)"/><circle cx="774.4" cy="357.9" r="12.2" fill="url(#g1)"/><circle cx="753.1" cy="281.3" r="12.2" fill="url(#g2)"/><circle cx="540.8" cy="281.5" r="12.2" fill="url(#g5)"/><circle cx="630.3" cy="639.7" r="12.2" fill="url(#g4)"/><circle cx="609.0" cy="563.1" r="12.2" fill="url(#g1)"/><circle cx="757.6" cy="333.1" r="12.2" fill="url(#g1)"/><circle cx="736.3" cy="256.4" r="12.2" fill="url(#g3)"/><circle cx="523.7" cy="256.6" r="12.2" fill="url(#g1)"/><circle cx="613.2" cy="615.2" r="12.2" fill="url(#g5)"/><circle cx="591.9" cy="538.6" r="12.2" fill="url(#g1)"/><circle cx="762.0" cy="385.0" r="12.2" fill="url(#g5)"/><circle cx="740.7" cy="308.3" r="12.2" fill="url(#g1)"/><circle cx="596.2" cy="590.7" r="12.2" fill="url(#g4)"/><circle cx="574.8" cy="513.9" r="12.2" fill="url(#g1)"/><circle cx="745.2" cy="360.2" r="12.2" fill="url(#g4)"/><circle cx="723.8" cy="283.3" r="12.2" fill="url(#g3)"/><circle cx="510.7" cy="283.5" r="12.2" fill="url(#g2)"/><circle cx="579.1" cy="566.1" r="12.2" fill="url(#g3)"/><circle cx="557.7" cy="489.2" r="12.2" fill="url(#g2)"/><circle cx="749.6" cy="412.2" r="12.2" fill="url(#g5)"/><circle cx="706.9" cy="258.4" r="12.2" fill="url(#g5)"/><circle cx="493.5" cy="258.5" r="12.2" fill="url(#g1)"/><circle cx="561.9" cy="541.5" r="12.2" fill="url(#g1)"/><circle cx="540.5" cy="464.5" r="12.2" fill="url(#g4)"/><circle cx="732.7" cy="387.4" r="12.2" fill="url(#g2)"/><circle cx="711.3" cy="310.4" r="12.2" fill="url(#g2)"/><circle cx="544.8" cy="516.8" r="12.2" fill="url(#g4)"/><circle cx="737.1" cy="439.5" r="12.2" fill="url(#g1)"/><circle cx="523.3" cy="439.7" r="12.2" fill="url(#g2)"/><circle cx="694.3" cy="285.4" r="12.2" fill="url(#g2)"/><circle cx="480.4" cy="285.5" r="12.2" fill="url(#g4)"/><circle cx="527.5" cy="492.0" r="12.3" fill="url(#g5)"/><circle cx="720.1" cy="414.7" r="12.3" fill="url(#g1)"/><circle cx="506.1" cy="414.8" r="12.3" fill="url(#g4)"/><circle cx="677.2" cy="260.3" r="12.3" fill="url(#g2)"/><circle cx="463.1" cy="260.5" r="12.3" fill="url(#g2)"/><circle cx="724.6" cy="467.0" r="12.3" fill="url(#g1)"/><circle cx="510.3" cy="467.2" r="12.3" fill="url(#g2)"/><circle cx="488.8" cy="389.9" r="12.3" fill="url(#g1)"/><circle cx="681.6" cy="312.5" r="12.3" fill="url(#g1)"/><circle cx="707.5" cy="442.1" r="12.3" fill="url(#g3)"/><circle cx="493.0" cy="442.3" r="12.3" fill="url(#g4)"/><circle cx="471.4" cy="364.9" r="12.3" fill="url(#g1)"/><circle cx="664.5" cy="287.4" r="12.3" fill="url(#g1)"/><circle cx="449.9" cy="287.6" r="12.3" fill="url(#g3)"/><circle cx="712.0" cy="494.6" r="12.3" fill="url(#g2)"/><circle cx="475.6" cy="417.3" r="12.3" fill="url(#g5)"/><circle cx="454.1" cy="339.9" r="12.3" fill="url(#g5)"/><circle cx="647.4" cy="262.3" r="12.3" fill="url(#g5)"/><circle cx="432.5" cy="262.4" r="12.3" fill="url(#g1)"/><circle cx="694.9" cy="469.7" r="12.3" fill="url(#g3)"/><circle cx="458.2" cy="392.3" r="12.3" fill="url(#g5)"/><circle cx="436.6" cy="314.8" r="12.3" fill="url(#g4)"/><circle cx="699.3" cy="522.3" r="12.3" fill="url(#g1)"/><circle cx="440.8" cy="367.3" r="12.3" fill="url(#g3)"/><circle cx="634.6" cy="289.4" r="12.3" fill="url(#g2)"/><circle cx="419.2" cy="289.6" r="12.3" fill="url(#g4)"/><circle cx="682.2" cy="497.4" r="12.3" fill="url(#g4)"/><circle cx="423.3" cy="342.1" r="12.3" fill="url(#g5)"/><circle cx="617.3" cy="264.2" r="12.3" fill="url(#g3)"/><circle cx="401.7" cy="264.4" r="12.3" fill="url(#g3)"/><circle cx="686.6" cy="550.2" r="12.4" fill="url(#g1)"/><circle cx="405.8" cy="316.9" r="12.4" fill="url(#g3)"/><circle cx="669.4" cy="525.2" r="12.4" fill="url(#g1)"/><circle cx="604.4" cy="291.5" r="12.4" fill="url(#g1)"/><circle cx="388.2" cy="291.7" r="12.4" fill="url(#g3)"/><circle cx="673.8" cy="578.1" r="12.4" fill="url(#g1)"/><circle cx="803.4" cy="266.0" r="12.4" fill="url(#g5)"/><circle cx="587.0" cy="266.2" r="12.4" fill="url(#g4)"/><circle cx="370.6" cy="266.4" r="12.4" fill="url(#g4)"/><circle cx="656.5" cy="553.2" r="12.4" fill="url(#g1)"/><circle cx="661.0" cy="606.2" r="12.4" fill="url(#g5)"/><circle cx="639.2" cy="528.1" r="12.4" fill="url(#g3)"/><circle cx="790.9" cy="293.4" r="12.4" fill="url(#g2)"/><circle cx="574.0" cy="293.6" r="12.4" fill="url(#g4)"/><circle cx="643.7" cy="581.2" r="12.4" fill="url(#g1)"/><circle cx="621.9" cy="503.0" r="12.4" fill="url(#g1)"/><circle cx="773.7" cy="268.0" r="12.4" fill="url(#g3)"/><circle cx="556.6" cy="268.2" r="12.4" fill="url(#g1)"/><circle cx="648.1" cy="634.5" r="12.4" fill="url(#g1)"/><circle cx="626.3" cy="556.2" r="12.4" fill="url(#g1)"/><circle cx="778.3" cy="320.9" r="12.4" fill="url(#g2)"/><circle cx="630.7" cy="609.5" r="12.5" fill="url(#g2)"/><circle cx="608.9" cy="531.0" r="12.5" fill="url(#g3)"/><circle cx="761.1" cy="295.5" r="12.5" fill="url(#g4)"/><circle cx="543.4" cy="295.7" r="12.5" fill="url(#g5)"/><circle cx="613.3" cy="584.4" r="12.5" fill="url(#g5)"/><circle cx="591.4" cy="505.9" r="12.5" fill="url(#g1)"/><circle cx="765.6" cy="348.6" r="12.5" fill="url(#g4)"/><circle cx="743.8" cy="270.0" r="12.5" fill="url(#g5)"/><circle cx="525.8" cy="270.2" r="12.5" fill="url(#g1)"/><circle cx="595.8" cy="559.2" r="12.5" fill="url(#g4)"/><circle cx="573.9" cy="480.6" r="12.5" fill="url(#g4)"/><circle cx="748.3" cy="323.1" r="12.5" fill="url(#g1)"/><circle cx="578.3" cy="534.0" r="12.5" fill="url(#g1)"/><circle cx="556.4" cy="455.3" r="12.5" fill="url(#g1)"/><circle cx="752.9" cy="376.4" r="12.5" fill="url(#g1)"/><circle cx="731.0" cy="297.6" r="12.5" fill="url(#g3)"/><circle cx="512.6" cy="297.8" r="12.5" fill="url(#g2)"/><circle cx="560.7" cy="508.7" r="12.5" fill="url(#g1)"/><circle cx="538.8" cy="429.9" r="12.5" fill="url(#g1)"/><circle cx="735.6" cy="350.9" r="12.5" fill="url(#g5)"/><circle cx="713.7" cy="272.1" r="12.5" fill="url(#g2)"/><circle cx="494.9" cy="272.2" r="12.5" fill="url(#g2)"/><circle cx="543.2" cy="483.4" r="12.5" fill="url(#g2)"/><circle cx="740.1" cy="404.3" r="12.5" fill="url(#g1)"/><circle cx="521.2" cy="404.5" r="12.5" fill="url(#g5)"/><circle cx="718.2" cy="325.4" r="12.5" fill="url(#g4)"/><circle cx="525.5" cy="458.0" r="12.5" fill="url(#g3)"/><circle cx="722.7" cy="378.8" r="12.5" fill="url(#g1)"/><circle cx="503.5" cy="379.0" r="12.5" fill="url(#g4)"/><circle cx="700.8" cy="299.8" r="12.5" fill="url(#g4)"/><circle cx="481.5" cy="299.9" r="12.5" fill="url(#g3)"/><circle cx="727.3" cy="432.3" r="12.6" fill="url(#g4)"/><circle cx="507.8" cy="432.5" r="12.6" fill="url(#g3)"/><circle cx="485.8" cy="353.4" r="12.6" fill="url(#g4)"/><circle cx="683.3" cy="274.1" r="12.6" fill="url(#g4)"/><circle cx="463.8" cy="274.3" r="12.6" fill="url(#g3)"/><circle cx="709.8" cy="406.8" r="12.6" fill="url(#g3)"/><circle cx="490.1" cy="407.0" r="12.6" fill="url(#g2)"/><circle cx="687.8" cy="327.6" r="12.6" fill="url(#g2)"/><circle cx="468.0" cy="327.8" r="12.6" fill="url(#g4)"/><circle cx="714.4" cy="460.5" r="12.6" fill="url(#g1)"/><circle cx="472.3" cy="381.4" r="12.6" fill="url(#g1)"/><circle cx="670.3" cy="301.9" r="12.6" fill="url(#g1)"/><circle cx="450.2" cy="302.1" r="12.6" fill="url(#g1)"/><circle cx="696.9" cy="435.0" r="12.6" fill="url(#g2)"/><circle cx="454.5" cy="355.7" r="12.6" fill="url(#g4)"/><circle cx="652.7" cy="276.1" r="12.6" fill="url(#g4)"/><circle cx="432.4" cy="276.3" r="12.6" fill="url(#g1)"/><circle cx="701.4" cy="488.8" r="12.6" fill="url(#g1)"/><circle cx="436.7" cy="330.0" r="12.6" fill="url(#g1)"/><circle cx="683.9" cy="463.2" r="12.6" fill="url(#g3)"/><circle cx="639.6" cy="304.0" r="12.6" fill="url(#g1)"/><circle cx="418.7" cy="304.2" r="12.6" fill="url(#g3)"/><circle cx="688.4" cy="517.3" r="12.7" fill="url(#g5)"/><circle cx="621.9" cy="278.2" r="12.7" fill="url(#g5)"/><circle cx="400.8" cy="278.4" r="12.7" fill="url(#g2)"/><circle cx="670.8" cy="491.7" r="12.7" fill="url(#g3)"/><circle cx="675.3" cy="545.8" r="12.7" fill="url(#g3)"/><circle cx="608.7" cy="306.2" r="12.7" fill="url(#g1)"/><circle cx="657.6" cy="520.2" r="12.7" fill="url(#g4)"/><circle cx="590.9" cy="280.3" r="12.7" fill="url(#g4)"/><circle cx="662.2" cy="574.6" r="12.7" fill="url(#g3)"/><circle cx="639.9" cy="494.5" r="12.7" fill="url(#g4)"/><circle cx="644.4" cy="548.9" r="12.7" fill="url(#g1)"/><circle cx="577.5" cy="308.4" r="12.7" fill="url(#g3)"/><circle cx="649.0" cy="603.4" r="12.7" fill="url(#g4)"/><circle cx="626.6" cy="523.2" r="12.7" fill="url(#g4)"/><circle cx="782.4" cy="282.2" r="12.7" fill="url(#g3)"/><circle cx="559.6" cy="282.4" r="12.7" fill="url(#g2)"/><circle cx="631.2" cy="577.7" r="12.8" fill="url(#g3)"/><circle cx="608.8" cy="497.4" r="12.8" fill="url(#g4)"/><circle cx="613.3" cy="552.0" r="12.8" fill="url(#g2)"/><circle cx="590.9" cy="471.5" r="12.8" fill="url(#g1)"/><circle cx="769.4" cy="310.4" r="12.8" fill="url(#g4)"/><circle cx="546.1" cy="310.6" r="12.8" fill="url(#g5)"/><circle cx="595.4" cy="526.2" r="12.8" fill="url(#g4)"/><circle cx="573.0" cy="445.6" r="12.8" fill="url(#g5)"/><circle cx="751.7" cy="284.3" r="12.8" fill="url(#g2)"/><circle cx="528.2" cy="284.5" r="12.8" fill="url(#g4)"/><circle cx="577.5" cy="500.3" r="12.8" fill="url(#g2)"/><circle cx="555.0" cy="419.7" r="12.8" fill="url(#g5)"/><circle cx="756.4" cy="338.8" r="12.8" fill="url(#g1)"/><circle cx="559.5" cy="474.4" r="12.8" fill="url(#g3)"/><circle cx="537.0" cy="393.6" r="12.8" fill="url(#g4)"/><circle cx="738.6" cy="312.7" r="12.8" fill="url(#g2)"/><circle cx="514.5" cy="312.8" r="12.8" fill="url(#g4)"/><circle cx="541.5" cy="448.4" r="12.8" fill="url(#g3)"/><circle cx="743.3" cy="367.3" r="12.8" fill="url(#g3)"/><circle cx="518.9" cy="367.5" r="12.8" fill="url(#g4)"/><circle cx="720.8" cy="286.4" r="12.8" fill="url(#g5)"/><circle cx="496.4" cy="286.6" r="12.8" fill="url(#g5)"/><circle cx="523.4" cy="422.3" r="12.9" fill="url(#g1)"/><circle cx="725.5" cy="341.1" r="12.9" fill="url(#g2)"/><circle cx="500.8" cy="341.3" r="12.9" fill="url(#g1)"/><circle cx="730.1" cy="396.0" r="12.9" fill="url(#g2)"/><circle cx="505.3" cy="396.1" r="12.9" fill="url(#g2)"/><circle cx="707.6" cy="314.9" r="12.9" fill="url(#g2)"/><circle cx="482.7" cy="315.1" r="12.9" fill="url(#g2)"/><circle cx="712.3" cy="369.8" r="12.9" fill="url(#g1)"/><circle cx="487.1" cy="369.9" r="12.9" fill="url(#g2)"/><circle cx="689.7" cy="288.6" r="12.9" fill="url(#g5)"/><circle cx="464.5" cy="288.7" r="12.9" fill="url(#g1)"/><circle cx="716.9" cy="424.7" r="12.9" fill="url(#g4)"/><circle cx="694.3" cy="343.5" r="12.9" fill="url(#g5)"/><circle cx="468.9" cy="343.7" r="12.9" fill="url(#g4)"/><circle cx="699.0" cy="398.5" r="12.9" fill="url(#g4)"/><circle cx="676.4" cy="317.1" r="12.9" fill="url(#g5)"/><circle cx="450.6" cy="317.3" r="12.9" fill="url(#g4)"/><circle cx="703.6" cy="453.7" r="12.9" fill="url(#g3)"/><circle cx="658.3" cy="290.7" r="12.9" fill="url(#g5)"/><circle cx="432.3" cy="290.9" r="12.9" fill="url(#g5)"/><circle cx="685.6" cy="427.4" r="13.0" fill="url(#g4)"/><circle cx="690.3" cy="482.7" r="13.0" fill="url(#g1)"/><circle cx="644.9" cy="319.4" r="13.0" fill="url(#g4)"/><circle cx="672.2" cy="456.4" r="13.0" fill="url(#g5)"/><circle cx="626.8" cy="292.9" r="13.0" fill="url(#g1)"/><circle cx="676.9" cy="511.9" r="13.0" fill="url(#g3)"/><circle cx="658.8" cy="485.6" r="13.0" fill="url(#g2)"/><circle cx="613.2" cy="321.7" r="13.0" fill="url(#g1)"/><circle cx="663.4" cy="541.3" r="13.0" fill="url(#g2)"/><circle cx="640.6" cy="459.2" r="13.0" fill="url(#g3)"/><circle cx="594.9" cy="295.1" r="13.0" fill="url(#g4)"/><circle cx="645.2" cy="515.0" r="13.0" fill="url(#g1)"/><circle cx="649.9" cy="570.8" r="13.1" fill="url(#g1)"/><circle cx="627.0" cy="488.5" r="13.1" fill="url(#g4)"/><circle cx="581.2" cy="324.0" r="13.1" fill="url(#g2)"/><circle cx="631.6" cy="544.4" r="13.1" fill="url(#g5)"/><circle cx="608.7" cy="462.1" r="13.1" fill="url(#g1)"/><circle cx="562.9" cy="297.3" r="13.1" fill="url(#g5)"/><circle cx="613.3" cy="518.0" r="13.1" fill="url(#g2)"/><circle cx="590.4" cy="435.5" r="13.1" fill="url(#g4)"/><circle cx="595.0" cy="491.5" r="13.1" fill="url(#g5)"/><circle cx="572.0" cy="408.9" r="13.1" fill="url(#g4)"/><circle cx="549.0" cy="326.3" r="13.1" fill="url(#g4)"/><circle cx="576.6" cy="464.9" r="13.1" fill="url(#g5)"/><circle cx="553.6" cy="382.2" r="13.1" fill="url(#g2)"/><circle cx="760.0" cy="299.3" r="13.1" fill="url(#g3)"/><circle cx="530.6" cy="299.5" r="13.1" fill="url(#g1)"/><circle cx="558.2" cy="438.3" r="13.1" fill="url(#g1)"/><circle cx="535.1" cy="355.5" r="13.1" fill="url(#g1)"/><circle cx="539.7" cy="411.6" r="13.2" fill="url(#g5)"/><circle cx="746.6" cy="328.5" r="13.2" fill="url(#g2)"/><circle cx="516.6" cy="328.7" r="13.2" fill="url(#g4)"/><circle cx="521.1" cy="384.8" r="13.2" fill="url(#g4)"/><circle cx="728.3" cy="301.6" r="13.2" fill="url(#g5)"/><circle cx="498.0" cy="301.8" r="13.2" fill="url(#g3)"/><circle cx="733.1" cy="357.7" r="13.2" fill="url(#g3)"/><circle cx="502.6" cy="357.9" r="13.2" fill="url(#g4)"/><circle cx="714.8" cy="330.8" r="13.2" fill="url(#g2)"/><circle cx="483.9" cy="331.0" r="13.2" fill="url(#g4)"/><circle cx="719.6" cy="387.2" r="13.2" fill="url(#g1)"/><circle cx="696.4" cy="303.8" r="13.2" fill="url(#g4)"/><circle cx="465.2" cy="304.0" r="13.2" fill="url(#g4)"/><circle cx="701.2" cy="360.2" r="13.2" fill="url(#g5)"/><circle cx="706.0" cy="416.7" r="13.3" fill="url(#g2)"/><circle cx="682.7" cy="333.2" r="13.3" fill="url(#g1)"/><circle cx="687.5" cy="389.8" r="13.3" fill="url(#g1)"/><circle cx="664.3" cy="306.1" r="13.3" fill="url(#g3)"/><circle cx="692.3" cy="446.4" r="13.3" fill="url(#g5)"/><circle cx="669.0" cy="362.7" r="13.3" fill="url(#g3)"/><circle cx="673.8" cy="419.4" r="13.3" fill="url(#g3)"/><circle cx="650.5" cy="335.6" r="13.3" fill="url(#g3)"/><circle cx="678.6" cy="476.3" r="13.3" fill="url(#g1)"/><circle cx="631.8" cy="308.4" r="13.3" fill="url(#g3)"/><circle cx="660.0" cy="449.3" r="13.3" fill="url(#g4)"/><circle cx="664.7" cy="506.3" r="13.4" fill="url(#g3)"/><circle cx="617.9" cy="338.0" r="13.4" fill="url(#g2)"/><circle cx="646.1" cy="479.3" r="13.4" fill="url(#g2)"/><circle cx="599.2" cy="310.7" r="13.4" fill="url(#g4)"/><circle cx="650.9" cy="536.5" r="13.4" fill="url(#g5)"/><circle cx="627.4" cy="452.1" r="13.4" fill="url(#g2)"/><circle cx="632.1" cy="509.4" r="13.4" fill="url(#g2)"/><circle cx="608.6" cy="424.9" r="13.4" fill="url(#g2)"/><circle cx="585.1" cy="340.4" r="13.4" fill="url(#g5)"/><circle cx="613.4" cy="482.2" r="13.4" fill="url(#g5)"/><circle cx="589.8" cy="397.6" r="13.4" fill="url(#g3)"/><circle cx="566.3" cy="313.0" r="13.4" fill="url(#g3)"/><circle cx="594.6" cy="455.0" r="13.5" fill="url(#g3)"/><circle cx="571.0" cy="370.3" r="13.5" fill="url(#g5)"/><circle cx="575.7" cy="427.7" r="13.5" fill="url(#g1)"/><circle cx="552.1" cy="342.9" r="13.5" fill="url(#g4)"/><circle cx="556.8" cy="400.3" r="13.5" fill="url(#g5)"/><circle cx="533.1" cy="315.4" r="13.5" fill="url(#g5)"/><circle cx="537.8" cy="372.9" r="13.5" fill="url(#g4)"/><circle cx="518.8" cy="345.3" r="13.5" fill="url(#g1)"/><circle cx="736.3" cy="317.5" r="13.5" fill="url(#g4)"/><circle cx="499.7" cy="317.7" r="13.5" fill="url(#g3)"/><circle cx="722.4" cy="347.6" r="13.6" fill="url(#g4)"/><circle cx="703.5" cy="319.9" r="13.6" fill="url(#g2)"/><circle cx="708.4" cy="377.9" r="13.6" fill="url(#g1)"/><circle cx="689.5" cy="350.1" r="13.6" fill="url(#g1)"/><circle cx="694.4" cy="408.3" r="13.6" fill="url(#g1)"/><circle cx="670.5" cy="322.3" r="13.6" fill="url(#g2)"/><circle cx="675.4" cy="380.5" r="13.7" fill="url(#g3)"/><circle cx="680.3" cy="438.8" r="13.7" fill="url(#g1)"/><circle cx="656.3" cy="352.7" r="13.7" fill="url(#g1)"/><circle cx="661.2" cy="411.0" r="13.7" fill="url(#g2)"/><circle cx="637.2" cy="324.7" r="13.7" fill="url(#g3)"/><circle cx="666.1" cy="469.5" r="13.7" fill="url(#g1)"/><circle cx="647.0" cy="441.7" r="13.7" fill="url(#g2)"/><circle cx="622.9" cy="355.2" r="13.7" fill="url(#g1)"/><circle cx="651.9" cy="500.4" r="13.7" fill="url(#g2)"/><circle cx="627.8" cy="413.8" r="13.8" fill="url(#g4)"/><circle cx="603.7" cy="327.2" r="13.8" fill="url(#g2)"/><circle cx="632.7" cy="472.5" r="13.8" fill="url(#g1)"/><circle cx="608.5" cy="385.8" r="13.8" fill="url(#g3)"/><circle cx="613.4" cy="444.6" r="13.8" fill="url(#g3)"/><circle cx="589.2" cy="357.8" r="13.8" fill="url(#g2)"/><circle cx="594.1" cy="416.6" r="13.8" fill="url(#g4)"/><circle cx="569.9" cy="329.6" r="13.8" fill="url(#g3)"/><circle cx="574.7" cy="388.5" r="13.8" fill="url(#g2)"/><circle cx="555.3" cy="360.3" r="13.8" fill="url(#g4)"/><circle cx="535.8" cy="332.1" r="13.9" fill="url(#g4)"/><circle cx="711.0" cy="336.9" r="14.0" fill="url(#g4)"/><circle cx="696.6" cy="368.0" r="14.0" fill="url(#g2)"/><circle cx="677.1" cy="339.5" r="14.0" fill="url(#g1)"/><circle cx="682.1" cy="399.3" r="14.0" fill="url(#g2)"/><circle cx="662.5" cy="370.7" r="14.1" fill="url(#g5)"/><circle cx="667.6" cy="430.7" r="14.1" fill="url(#g3)"/><circle cx="642.9" cy="342.0" r="14.1" fill="url(#g2)"/><circle cx="647.9" cy="402.1" r="14.1" fill="url(#g4)"/><circle cx="653.0" cy="462.3" r="14.1" fill="url(#g1)"/><circle cx="628.2" cy="373.4" r="14.1" fill="url(#g1)"/><circle cx="633.2" cy="433.7" r="14.1" fill="url(#g4)"/><circle cx="608.4" cy="344.6" r="14.1" fill="url(#g4)"/><circle cx="613.4" cy="404.9" r="14.2" fill="url(#g1)"/><circle cx="593.6" cy="376.1" r="14.2" fill="url(#g4)"/><circle cx="573.7" cy="347.2" r="14.2" fill="url(#g5)"/><circle cx="684.1" cy="357.6" r="14.4" fill="url(#g1)"/><circle cx="669.1" cy="389.8" r="14.5" fill="url(#g3)"/><circle cx="648.9" cy="360.3" r="14.5" fill="url(#g2)"/><circle cx="654.1" cy="422.1" r="14.5" fill="url(#g1)"/><circle cx="633.8" cy="392.6" r="14.5" fill="url(#g5)"/><circle cx="613.5" cy="363.0" r="14.6" fill="url(#g4)"/><circle cx="655.3" cy="379.6" r="14.9" fill="url(#g4)"/><g stroke="#fff" stroke-width="1.1" fill="none"><path d="M406.1 538.9L413.7 543.3"/><path d="M431.0 553.3L440.9 559.0"/><path d="M458.9 569.4L467.0 574.2"/><path d="M485.7 585.0L494.1 589.9"/><path d="M513.5 601.1L524.4 607.4"/><path d="M544.6 619.1L553.7 624.4"/><path d="M574.6 636.5L586.5 643.4"/><path d="M605.8 654.6L618.2 661.8"/><path d="M638.3 673.5L664.2 688.5"/><path d="M664.2 688.5L836.5 493.1"/><path d="M836.5 493.1L822.7 487.3"/><path d="M353.0 241.0L678.0 366.0"/><path d="M678.0 366.0L881.6 208.9"/><path d="M881.6 208.9L591.7 133.4"/><path d="M591.7 133.4L353.0 241.0"/><path d="M397.4 526.4L396.1 518.2"/><path d="M392.9 497.3L391.9 490.9"/><path d="M388.5 469.1L387.1 460.2"/><path d="M383.9 439.7L382.5 430.5"/><path d="M379.1 409.2L377.3 397.1"/><path d="M373.8 374.8L372.2 364.7"/><path d="M368.6 341.4L366.6 328.2"/><path d="M363.2 306.6L361.0 292.8"/><path d="M357.1 267.3L353.0 241.0"/><path d="M664.2 688.5L678.0 366.0"/><path d="M836.5 493.1L881.6 208.9"/><path d="M591.9 148.4L591.7 133.4"/></g></svg><div id="persp" class="t" style="left:4.50px;top:76.08px;font-size:13px;color:#fff;letter-spacing:0.113px">Perspective</div><svg class="a" style="left:20px;top:630px" width="80" height="70" viewBox="20 630 80 70" font-family="Liberation Sans, sans-serif"><path d="M41.500 670.500V648M38.500 650.500L41.500 647 45 650.500" stroke="#6a6af0" stroke-width="1" fill="none"/><path d="M41.500 670.500L58.500 658.500M55 657.500L59 658 58.500 662" stroke="#00e000" stroke-width="1" fill="none"/><path d="M41.500 670.500L64.500 680M62 675.500L65 680 60.500 682.500" stroke="#f00000" stroke-width="1" fill="none"/><text x="38.500" y="646.500" font-size="11" fill="#6a6af0">z</text><text x="60" y="662" font-size="11" fill="#00e000">y</text><text x="66.500" y="688" font-size="11" fill="#f00000">x</text></svg><div class="a" style="left:1222px;top:70px;width:1px;height:1038px;background:#a0a0a0"></div>
<div class="a" style="left:1223px;top:70px;width:697px;height:24px;background:#c1c1c1;border-top:1px solid #9c9c9c;border-bottom:1px solid #9a9a9a"></div>
<div class="a" style="left:1224px;top:71px;width:78px;height:22px;background:#d5d5d5"></div>
<div class="a" style="left:1302px;top:71px;width:1px;height:22px;background:#9a9a9a"></div>
<div class="a" style="left:1382px;top:71px;width:1px;height:22px;background:#9a9a9a"></div>
<div class="a" style="left:1462px;top:71px;width:1px;height:22px;background:#9a9a9a"></div>
<svg class="a" style="left:1233px;top:72px" width="16" height="18" viewBox="0 0 16 18"><g fill="none" stroke="#444" stroke-width="1.5"><circle cx="4.5" cy="3.3" r="1.9"/><circle cx="4.5" cy="14.7" r="1.9"/><circle cx="11.7" cy="5.3" r="1.9"/><path d="M4.5 5.2V12.8M11.7 7.2C11.7 10.5 4.5 9.5 4.5 12.8"/></g></svg>
<svg class="a" style="left:1314px;top:72px" width="18" height="18" viewBox="0 0 24 24"><path fill="#444" d="M9 2.5L7.17 4.5H4c-1.1 0-2 .9-2 2v12c0 1.1.9 2 2 2h16c1.1 0 2-.9 2-2v-12c0-1.1-.9-2-2-2h-3.170L15 2.5H9z"/><circle cx="12" cy="12.5" r="4" fill="none" stroke="#d0d0d0" stroke-width="1.8"/></svg>
<svg class="a" style="left:1395px;top:73px" width="15" height="15" viewBox="0 0 24 24"><path fill="#444" d="M11.99 18.54l-7.37-5.73L3 14.070l9 7 9-7-1.63-1.270-7.38 5.740zM12 16l7.36-5.73L21 9l-9-7-9 7 1.63 1.270L12 16z"/></svg>
<div class="a" style="left:1229px;top:98px;width:682px;height:20px;background:#fff;border-radius:5px;box-shadow:0 0 0 .5px #c8c8c8,0 1px 1.5px rgba(0,0,0,.25)"></div>
<div id="addmod" class="t" style="left:1237.20px;top:101.88px;font-size:13px;color:#111;letter-spacing:0.267px">Add modification...</div>
<div class="a" style="left:1892px;top:100px;width:16px;height:16px;border-radius:4px;background:linear-gradient(#3f93f8,#0b68f0)"></div>
<svg class="a" style="left:1892px;top:100px" width="16" height="16" viewBox="0 0 16 16"><path d="M5 6.3L8 3.4 11 6.3M5 9.7L8 12.6 11 9.7" stroke="#fff" stroke-width="1.5" fill="none" stroke-linecap="round" stroke-linejoin="round"/></svg>
<div class="a" style="left:1226px;top:126px;width:655px;height:260px;background:#fff;border:1px solid #b4b4b4;border-top-color:#9c9c9c"></div>
<div class="a" style="left:1227px;top:127px;width:653px;height:14px;background:#f5f5f5"></div>
<div class="a" style="left:1227px;top:245px;width:653px;height:14px;background:#f5f5f5"></div>
<div class="a" style="left:1227px;top:363px;width:653px;height:14px;background:#f5f5f5"></div>
<div class="t" style="left:1514.60px;top:128.45px;font-size:11px;color:#1a1ae8;letter-spacing:-0.014px">Visual elements</div>
<div class="t" style="left:1520.00px;top:246.55px;font-size:11px;color:#1a1ae8;letter-spacing:0.179px">Modifications</div>
<div class="t" style="left:1524.50px;top:364.55px;font-size:11px;color:#1a1ae8;letter-spacing:-0.145px">Data source</div>
<div class="a" style="left:1227px;top:285px;width:653px;height:26px;background:#0a4ad9"></div>
<div class="cb on" style="left:1234px;top:148px"></div>
<div class="t" style="left:1289.60px;top:148.38px;font-size:13px;color:#000;letter-spacing:-0.309px">Particles</div>
<div class="cb off" style="left:1234px;top:174px"></div>
<div class="t" style="left:1289.60px;top:174.38px;font-size:13px;color:#000;letter-spacing:-0.670px">Forces</div>
<div class="cb off" style="left:1234px;top:200px"></div>
<div class="t" style="left:1289.60px;top:200.38px;font-size:13px;color:#000;letter-spacing:-0.164px">Velocities</div>
<div class="cb on" style="left:1234px;top:226px"></div>
<div class="t" style="left:1289.60px;top:226.38px;font-size:13px;color:#000;letter-spacing:-0.205px">Simulation cell</div>
<div class="cb on" style="left:1234px;top:265px"></div>
<div class="t" style="left:1289.60px;top:265.78px;font-size:13px;color:#000;letter-spacing:-0.214px">Clear selection</div>
<div class="cb on" style="left:1234px;top:291px"></div>
<div class="t" style="left:1289.60px;top:291.68px;font-size:13px;color:#fff;letter-spacing:-0.335px">Generate Random Solution</div>
<div class="cb on" style="left:1234px;top:317px"></div>
<div class="t" style="left:1289.60px;top:317.58px;font-size:13px;color:#000;letter-spacing:-0.250px">Expression selection</div>
<div class="cb on" style="left:1234px;top:343px"></div>
<div class="t" style="left:1289.60px;top:343.58px;font-size:13px;color:#000;letter-spacing:-0.077px">Python script</div>
<div class="t" style="left:1415.40px;top:317.58px;font-size:13px;color:#b6b6b6;letter-spacing:-0.289px">ReducedPosition.Y &lt; .67</div>
<svg class="a" style="left:1234px;top:147px" width="14" height="220" viewBox="0 0 14 220"><g fill="none" stroke="#fff" stroke-width="1.8" stroke-linecap="round" stroke-linejoin="round"><path transform="translate(0 1)" d="M3.4 7.2L5.9 10 10.4 3.7"/><path transform="translate(0 79)" d="M3.4 7.2L5.9 10 10.4 3.7"/><path transform="translate(0 118)" d="M3.4 7.2L5.9 10 10.4 3.7"/><path transform="translate(0 144)" d="M3.4 7.2L5.9 10 10.4 3.7"/><path transform="translate(0 170)" d="M3.4 7.2L5.9 10 10.4 3.7"/><path transform="translate(0 196)" d="M3.4 7.2L5.9 10 10.4 3.7"/></g></svg>
<svg class="a" style="left:1887px;top:129px" width="26" height="28" viewBox="0 0 24 24"><path fill="#4a4a4a" d="M6 19c0 1.1.9 2 2 2h8c1.1 0 2-.9 2-2V7H6v12zM19 4h-3.5l-1-1h-5l-1 1H5v2h14V4z"/></svg>
<div class="hsep" style="left:1885px;top:167px;width:31px"></div>
<svg class="a" style="left:1887px;top:179px" width="26" height="26" viewBox="0 0 24 24"><path fill="#4a4a4a" d="M12 8l-6 6 1.41 1.41L12 10.83l4.59 4.58L18 14z"/></svg>
<svg class="a" style="left:1887px;top:217px" width="26" height="26" viewBox="0 0 24 24"><path fill="#4a4a4a" d="M16.59 8.59L12 13.17 7.41 8.59 6 10l6 6 6-6z"/></svg>
<div class="hsep" style="left:1885px;top:255px;width:31px"></div>
<svg class="a" style="left:1887px;top:269px" width="26" height="22" viewBox="0 0 26 22"><path stroke="#4a4a4a" stroke-width="2" d="M1 3.5H25M9 11H25M9 18.5H25"/></svg>
<svg class="a" style="left:1886px;top:303px" width="28" height="30" viewBox="0 0 24 24"><path fill="#4a4a4a" d="M19 3h-4.18C14.4 1.84 13.3 1 12 1c-1.3 0-2.4.84-2.82 2H5c-1.1 0-2 .9-2 2v14c0 1.1.9 2 2 2h14c1.1 0 2-.9 2-2V5c0-1.1-.9-2-2-2zm-7 0c.55 0 1 .45 1 1s-.45 1-1 1-1-.45-1-1 .45-1 1-1zm2 14H7v-2h7v2zm3-4H7v-2h10v2zm0-4H7V7h10v2z"/></svg>
<div class="a" style="left:1569px;top:387px;width:6px;height:6px;border-radius:3px;background:#d4d4d4"></div>
<div class="a" style="left:1227px;top:395px;width:690.5px;height:19.6px;background:#818181;border:1px solid #303030"></div>
<div id="h1" class="t" style="left:1523.00px;top:399.38px;font-size:13px;color:#fff;letter-spacing:0.265px">Python script</div>
<div class="a" style="left:1898.5px;top:396px;width:18px;height:17.6px;background:#3d7c3d;border-left:1px solid #2a2a2a"></div>
<div class="t" style="left:1905.00px;top:400.02px;font-size:12px;color:#fff;letter-spacing:-1.125px">?</div>
<div class="a" style="left:1227px;top:414px;width:690.5px;height:31px;border:1px solid #d8d8d8;border-top:none"></div>
<div class="a" style="left:1230px;top:419px;width:677px;height:21.5px;background:linear-gradient(#f6f6f6,#ececec 50%,#e4e4e4);border:1px solid #b8b8b8"></div>
<div id="edit" class="t" style="left:1538.70px;top:425.15px;font-size:11px;color:#111;letter-spacing:0.123px">Edit script...</div>
<svg class="a" style="left:1905px;top:432px" width="10" height="8" viewBox="0 0 10 8"><path d="M1.5 2L5 5.5 8.5 2" stroke="#222" stroke-width="1.4" fill="none"/></svg>
<div class="a" style="left:1227px;top:447.4px;width:690.5px;height:19.3px;background:#818181;border:1px solid #303030"></div>
<div id="h2" class="t" style="left:1519.30px;top:451.28px;font-size:13px;color:#fff;letter-spacing:0.283px">Working directory</div>
<div class="a" style="left:1227px;top:469.6px;width:690.5px;height:19.2px;background:#818181;border:1px solid #303030"></div>
<div id="h3" class="t" style="left:1538.30px;top:473.38px;font-size:13px;color:#fff;letter-spacing:-0.017px">Parameters</div>
<div class="a" style="left:1227px;top:488px;width:690.5px;height:74.5px;border:1px solid #d8d8d8;border-top:none"></div>
<div id="l1" class="t" style="left:1313.40px;top:494.98px;font-size:13px;color:#000;letter-spacing:0.179px">Only selected:</div>
<div class="cb on" style="left:1403.2px;top:494.4px;height:13.6px"></div>
<svg class="a" style="left:1403.2px;top:494.2px" width="14" height="14" viewBox="0 0 14 14"><path d="M3.4 7.2L5.9 10 10.4 3.7" fill="none" stroke="#fff" stroke-width="1.8" stroke-linecap="round" stroke-linejoin="round"/></svg>
<div id="l2" class="t" style="left:1303.00px;top:516.93px;font-size:13px;color:#000;letter-spacing:0.243px">Concentrations:</div>
<div class="a" style="left:1403px;top:514px;width:505.5px;height:19.2px;background:#fff;border:1px solid #e4e4e4;border-top-color:#c4c4c4"></div>
<div id="v2" class="t" style="left:1405.30px;top:518.38px;font-size:13px;color:#000;letter-spacing:0.164px">[0.0, 0.2, 0.2, 0.2, 0.2, 0.2]</div>
<div id="l3" class="t" style="left:1364.40px;top:541.88px;font-size:13px;color:#000;letter-spacing:-0.250px">Seed:</div>
<div class="a" style="left:1403px;top:538.6px;width:489.5px;height:19.7px;background:#fff;border:1px solid #e4e4e4;border-top-color:#c4c4c4"></div>
<div id="v3" class="t" style="left:1405.30px;top:543.18px;font-size:13px;color:#000;letter-spacing:-0.158px">1234</div>
<svg class="a" style="left:1895px;top:539px" width="12" height="20" viewBox="0 0 12 20"><path fill="#222" d="M6 1.5L11 7H1zM6 18.5L1 13H11z"/></svg>
<div class="a" style="left:1227px;top:565px;width:690.5px;height:19.6px;background:#818181;border:1px solid #303030"></div>
<div id="h4" class="t" style="left:1533.10px;top:569.08px;font-size:13px;color:#fff;letter-spacing:0.358px">Script output</div>
<div class="a" style="left:1227px;top:584px;width:690.5px;height:296px;border:1px solid #d8d8d8;border-top:none"></div>
<div class="a" style="left:1230px;top:589px;width:684px;height:288px;background:#fff;border:1px solid #c2c2c2"></div><div class="a" style="left:447px;top:714px;width:289px;height:19px;background:#fff;border-radius:5px;box-shadow:0 0 0 .5px #c4c4c4,0 1px 1.500px rgba(0,0,0,.22)"></div>
<div class="a" style="left:519px;top:716px;width:1px;height:15px;background:#dcdcdc"></div>
<div class="a" style="left:645px;top:714px;width:91px;height:19px;background:linear-gradient(#3c92f9,#1475f3);border-radius:0 5px 5px 0"></div>
<div class="t" style="left:456.70px;top:717.18px;font-size:13px;color:#111;letter-spacing:0.116px">Particles</div>
<div class="t" style="left:532.50px;top:717.18px;font-size:13px;color:#111;letter-spacing:0.289px">Global Attributes</div>
<div class="t" style="left:657.50px;top:717.18px;font-size:13px;color:#fff;letter-spacing:0.042px">Data Tables</div>
<svg class="a" style="left:1204px;top:718px" width="12" height="8" viewBox="0 0 12 8"><path d="M1.500 1.500L6 6 10.500 1.500" stroke="#444" stroke-width="1.500" fill="none"/></svg>
<div class="a" style="left:0;top:734px;width:278px;height:301px;background:#fff;border:1px solid #c6c6c6;border-top-color:#a8a8a8"></div>
<div class="a" style="left:1px;top:735px;width:276px;height:40px;background:#d4d4d4"></div>
<div class="t" style="left:6.30px;top:740.68px;font-size:13px;color:#fff;letter-spacing:0.206px;font-weight:bold">New concentrations</div>
<div class="a" style="left:278px;top:882px;width:5px;height:5px;border-radius:3px;background:#d8d8d8"></div>
<svg class="a" style="left:280px;top:734px" width="942" height="304" viewBox="280 734 942 304" font-family="Liberation Sans, sans-serif">
<rect x="332.3" y="734.4" width="857.7" height="274.4" fill="#fff"/>
<path d="M333.1 1008.8V735.2H1190" stroke="#bcbcbc" stroke-width="1.7" fill="none"/>
<path d="M334.5 1002.5H1187M334.5 958.5H1187M334.5 915.5H1187M334.5 871.5H1187M334.5 827.5H1187M334.5 784.5H1187M334.5 740.5H1187M406.5 736.5V1004M548.5 736.5V1004M690.5 736.5V1004M832.5 736.5V1004M974.5 736.5V1004M1116.5 736.5V1004" stroke="#8c8c8c" stroke-width="1" stroke-dasharray="1 2.1" fill="none"/>
<path d="M329.3 740V1003M321 1002.5H329.8M321 958.5H329.8M321 915.5H329.8M321 871.5H329.8M321 827.5H329.8M321 784.5H329.8M321 740.5H329.8M325 993.5H329.8M325 984.5H329.8M325 976.5H329.8M325 967.5H329.8M325 949.5H329.8M325 941.5H329.8M325 932.5H329.8M325 923.5H329.8M325 906.5H329.8M325 897.5H329.8M325 888.5H329.8M325 880.5H329.8M325 862.5H329.8M325 853.5H329.8M325 845.5H329.8M325 836.5H329.8M325 819.5H329.8M325 810.5H329.8M325 801.5H329.8M325 792.5H329.8M325 775.5H329.8M325 766.5H329.8M325 757.5H329.8M325 749.5H329.8" stroke="#222" stroke-width="1" fill="none"/>
<text x="310.60" y="1005.70" font-size="8" fill="#222" letter-spacing="0.100">0</text>
<text x="297.70" y="962.07" font-size="8" fill="#222" letter-spacing="0.625">0.05</text>
<text x="303.00" y="918.44" font-size="8" fill="#222" letter-spacing="0.537">0.1</text>
<text x="297.70" y="874.81" font-size="8" fill="#222" letter-spacing="0.625">0.15</text>
<text x="303.00" y="831.18" font-size="8" fill="#222" letter-spacing="0.537">0.2</text>
<text x="297.70" y="787.55" font-size="8" fill="#222" letter-spacing="0.625">0.25</text>
<text x="303.00" y="743.92" font-size="8" fill="#222" letter-spacing="0.537">0.3</text>
<rect x="340.2" y="753.3" width="132.5" height="248.9" fill="#a1a0a5" stroke="#444" stroke-width="1.1"/>
<rect x="482.0" y="877.5" width="132.5" height="124.7" fill="#a1a0a5" stroke="#444" stroke-width="1.1"/>
<rect x="623.8" y="877.5" width="132.5" height="124.7" fill="#a1a0a5" stroke="#444" stroke-width="1.1"/>
<rect x="765.6" y="877.5" width="132.5" height="124.7" fill="#a1a0a5" stroke="#444" stroke-width="1.1"/>
<rect x="907.4" y="877.5" width="132.5" height="124.7" fill="#a1a0a5" stroke="#444" stroke-width="1.1"/>
<rect x="1049.2" y="877.5" width="132.5" height="124.7" fill="#a1a0a5" stroke="#444" stroke-width="1.1"/>
<text x="401.90" y="1022.00" font-size="8" fill="#222" letter-spacing="0.475">Al</text>
<text x="534.20" y="1022.00" font-size="8" fill="#222" letter-spacing="0.520">Type 2</text>
<text x="676.00" y="1022.00" font-size="8" fill="#222" letter-spacing="0.520">Type 3</text>
<text x="817.80" y="1022.00" font-size="8" fill="#222" letter-spacing="0.520">Type 4</text>
<text x="959.60" y="1022.00" font-size="8" fill="#222" letter-spacing="0.520">Type 5</text>
<text x="1101.40" y="1022.00" font-size="8" fill="#222" letter-spacing="0.520">Type 6</text>
<text x="732.60" y="1032.50" font-size="9" fill="#222" letter-spacing="0.175" font-weight="bold">Particle type</text>
<g transform="translate(293.4 901.8) rotate(-90)"><text x="0.00" y="0.00" font-size="9" fill="#222" letter-spacing="0.075" font-weight="bold">Concentration</text></g>
</svg>
<div class="a" style="left:1190px;top:735px;width:32px;height:31px;background:#d2d2d2;border-radius:5px"></div>
<svg class="a" style="left:1193px;top:738px" width="26" height="26" viewBox="0 0 24 24"><path fill="#4a4a4a" d="M3.500 18.490l6-6.010 4 4L22 6.920l-1.410-1.410-7.090 7.970-4-4L2 16.990z"/></svg>
<svg class="a" style="left:1195px;top:776px" width="22" height="20" viewBox="0 0 22 20"><path fill="#4a4a4a" d="M1.500 1h19v3.200h-19zM1.500 6.500h5v12h-5zM8.500 6.500h5v12h-5zM15.500 6.500h5v12h-5z"/></svg>
<div class="hsep" style="left:1192px;top:808px;width:29px"></div>
<svg class="a" style="left:1193px;top:819px" width="26" height="26" viewBox="0 0 24 24"><path fill="#4a4a4a" d="M17 3H5c-1.110 0-2 .9-2 2v14c0 1.100.89 2 2 2h14c1.100 0 2-.9 2-2V7l-4-4zm-5 16c-1.660 0-3-1.340-3-3s1.340-3 3-3 3 1.340 3 3-1.340 3-3 3zm3-10H5V5h10v4z"/></svg>
<div class="a" style="left:0;top:1037px;width:1222px;height:1px;background:#c2c2c2"></div>
<svg class="a" style="left:0;top:1038px" width="897" height="70" viewBox="0 1038 897 70" font-family="Liberation Sans, sans-serif">
<path d="M45.5 1061.7V1076.6M53.5 1061.7V1068.7M61.5 1061.7V1068.7M69.5 1061.7V1068.7M77.5 1061.7V1068.7M85.5 1061.7V1076.6M93.5 1061.7V1068.7M101.5 1061.7V1068.7M109.5 1061.7V1068.7M117.5 1061.7V1068.7M125.5 1061.7V1076.6M133.5 1061.7V1068.7M141.5 1061.7V1068.7M149.5 1061.7V1068.7M158.5 1061.7V1068.7M166.5 1061.7V1076.6M174.5 1061.7V1068.7M182.5 1061.7V1068.7M190.5 1061.7V1068.7M198.5 1061.7V1068.7M206.5 1061.7V1076.6M214.5 1061.7V1068.7M222.5 1061.7V1068.7M230.5 1061.7V1068.7M238.5 1061.7V1068.7M246.5 1061.7V1076.6M254.5 1061.7V1068.7M262.5 1061.7V1068.7M270.5 1061.7V1068.7M278.5 1061.7V1068.7M286.5 1061.7V1076.6M295.5 1061.7V1068.7M303.5 1061.7V1068.7M311.5 1061.7V1068.7M319.5 1061.7V1068.7M327.5 1061.7V1076.6M335.5 1061.7V1068.7M343.5 1061.7V1068.7M351.5 1061.7V1068.7M359.5 1061.7V1068.7M367.5 1061.7V1076.6M375.5 1061.7V1068.7M383.5 1061.7V1068.7M391.5 1061.7V1068.7M399.5 1061.7V1068.7M407.5 1061.7V1076.6M415.5 1061.7V1068.7M424.5 1061.7V1068.7M432.5 1061.7V1068.7M440.5 1061.7V1068.7M448.5 1061.7V1076.6M456.5 1061.7V1068.7M464.5 1061.7V1068.7M472.5 1061.7V1068.7M480.5 1061.7V1068.7M488.5 1061.7V1076.6M496.5 1061.7V1068.7M504.5 1061.7V1068.7M512.5 1061.7V1068.7M520.5 1061.7V1068.7M528.5 1061.7V1076.6M536.5 1061.7V1068.7M544.5 1061.7V1068.7M552.5 1061.7V1068.7M561.5 1061.7V1068.7M569.5 1061.7V1076.6M577.5 1061.7V1068.7M585.5 1061.7V1068.7M593.5 1061.7V1068.7M601.5 1061.7V1068.7M609.5 1061.7V1076.6M617.5 1061.7V1068.7M625.5 1061.7V1068.7M633.5 1061.7V1068.7M641.5 1061.7V1068.7M649.5 1061.7V1076.6M657.5 1061.7V1068.7M665.5 1061.7V1068.7M673.5 1061.7V1068.7M681.5 1061.7V1068.7M690.5 1061.7V1076.6M698.5 1061.7V1068.7M706.5 1061.7V1068.7M714.5 1061.7V1068.7M722.5 1061.7V1068.7M730.5 1061.7V1076.6M738.5 1061.7V1068.7M746.5 1061.7V1068.7M754.5 1061.7V1068.7M762.5 1061.7V1068.7M770.5 1061.7V1076.6M778.5 1061.7V1068.7M786.5 1061.7V1068.7M794.5 1061.7V1068.7M802.5 1061.7V1068.7M810.5 1061.7V1076.6M818.5 1061.7V1068.7M827.5 1061.7V1068.7M835.5 1061.7V1068.7M843.5 1061.7V1068.7M851.5 1061.7V1076.6" stroke="#b4b4e4" stroke-width="1" fill="none"/>
<text x="40.93" y="1054.90" font-size="13" fill="#b4b4e6" letter-spacing="0.290">0</text>
<text x="81.23" y="1054.90" font-size="13" fill="#b4b4e6" letter-spacing="0.290">5</text>
<text x="117.76" y="1054.90" font-size="13" fill="#b4b4e6" letter-spacing="0.580">10</text>
<text x="158.06" y="1054.90" font-size="13" fill="#b4b4e6" letter-spacing="0.580">15</text>
<text x="198.36" y="1054.90" font-size="13" fill="#b4b4e6" letter-spacing="0.580">20</text>
<text x="238.66" y="1054.90" font-size="13" fill="#b4b4e6" letter-spacing="0.580">25</text>
<text x="278.96" y="1054.90" font-size="13" fill="#b4b4e6" letter-spacing="0.580">30</text>
<text x="319.26" y="1054.90" font-size="13" fill="#b4b4e6" letter-spacing="0.580">35</text>
<text x="359.56" y="1054.90" font-size="13" fill="#b4b4e6" letter-spacing="0.580">40</text>
<text x="399.86" y="1054.90" font-size="13" fill="#b4b4e6" letter-spacing="0.580">45</text>
<text x="440.16" y="1054.90" font-size="13" fill="#b4b4e6" letter-spacing="0.580">50</text>
<text x="480.46" y="1054.90" font-size="13" fill="#b4b4e6" letter-spacing="0.580">55</text>
<text x="520.76" y="1054.90" font-size="13" fill="#b4b4e6" letter-spacing="0.580">60</text>
<text x="561.06" y="1054.90" font-size="13" fill="#b4b4e6" letter-spacing="0.580">65</text>
<text x="601.36" y="1054.90" font-size="13" fill="#b4b4e6" letter-spacing="0.580">70</text>
<text x="641.66" y="1054.90" font-size="13" fill="#b4b4e6" letter-spacing="0.580">75</text>
<text x="681.96" y="1054.90" font-size="13" fill="#b4b4e6" letter-spacing="0.580">80</text>
<text x="722.26" y="1054.90" font-size="13" fill="#b4b4e6" letter-spacing="0.580">85</text>
<text x="762.56" y="1054.90" font-size="13" fill="#b4b4e6" letter-spacing="0.580">90</text>
<text x="802.86" y="1054.90" font-size="13" fill="#b4b4e6" letter-spacing="0.580">95</text>
<text x="839.39" y="1054.90" font-size="13" fill="#b4b4e6" letter-spacing="0.435">100</text>
<rect x="404" y="1039.5" width="89" height="21" fill="#d7d7d7"/><path d="M403.5 1061V1039.5H493.5" stroke="#f2f2f2" fill="none"/><path d="M403.5 1060.5H493V1040" stroke="#bdbdbd" fill="none"/>
<text x="423.90" y="1054.90" font-size="13" fill="#111" letter-spacing="0.129">50 / 100</text>
<path d="M444.500 1061H452L448.200 1065z" fill="#101050"/>
</svg>
<div class="a" style="left:896px;top:1038px;width:1px;height:70px;background:#b0b0b0"></div>
<div class="a" style="left:1108px;top:1038px;width:1px;height:70px;background:#b0b0b0"></div>
<div class="vsep" style="left:938px;top:1040px;height:31px"></div>
<div class="vsep" style="left:1065px;top:1040px;height:31px"></div>
<svg class="a" style="left:898.0px;top:1040.0px" width="32" height="32" viewBox="0 0 24 24"><path fill="#4a4a4a" d="M6 6h2v12H6zm3.500 6l8.500 6V6z"/></svg>
<svg class="a" style="left:945.5px;top:1039.0px" width="34" height="34" viewBox="0 0 24 24"><path fill="#4a4a4a" d="M11 18V6l-8.500 6 8.500 6zm.5-6l8.500 6V6l-8.500 6z"/></svg>
<svg class="a" style="left:986.0px;top:1039.0px" width="34" height="34" viewBox="0 0 24 24"><path fill="#4a4a4a" d="M8 5v14l11-7z"/></svg>
<svg class="a" style="left:1024.0px;top:1039.0px" width="34" height="34" viewBox="0 0 24 24"><path fill="#4a4a4a" d="M4 18l8.500-6L4 6v12zm9-12v12l8.500-6L13 6z"/></svg>
<svg class="a" style="left:1073.5px;top:1040.0px" width="32" height="32" viewBox="0 0 24 24"><path fill="#4a4a4a" d="M6 18l8.500-6L6 6v12zM16 6v12h2V6h-2z"/></svg>
<svg class="a" style="left:901.0px;top:1079.0px" width="24" height="24" viewBox="0 0 24 24"><path fill="#4a4a4a" d="M12.650 10C11.830 7.670 9.610 6 7 6c-3.310 0-6 2.690-6 6s2.690 6 6 6c2.610 0 4.830-1.670 5.650-4H17v4h4v-4h2v-4H12.650zM7 14c-1.100 0-2-.9-2-2s.9-2 2-2 2 .9 2 2-.9 2-2 2z"/></svg>
<div class="a" style="left:936px;top:1081px;width:113px;height:20px;background:#fff;border:1px solid #e0e0e0;border-top-color:#c4c4c4"></div>
<div class="t" style="left:938.80px;top:1085.08px;font-size:13px;color:#000;letter-spacing:0.200px">50</div>
<div class="a" style="left:1049px;top:1080.7px;width:15.5px;height:9.6px;background:#f2f2f2;border:1px solid #d2d2d2"></div>
<div class="a" style="left:1049px;top:1090.6px;width:15.5px;height:9.9px;background:#f2f2f2;border:1px solid #d2d2d2"></div>
<svg class="a" style="left:1050px;top:1081px" width="14" height="20" viewBox="0 0 14 20"><path fill="#111" d="M6.8 2.2L11.3 7H2.3zM6.800 17.6L2.300 12.800H11.300z"/></svg>
<svg class="a" style="left:1072.0px;top:1077.0px" width="28" height="28" viewBox="0 0 24 24"><path fill="#4a4a4a" d="M11.990 2C6.470 2 2 6.480 2 12s4.470 10 9.990 10C17.520 22 22 17.520 22 12S17.520 2 11.990 2zM12 20c-4.420 0-8-3.580-8-8s3.580-8 8-8 8 3.580 8 8-3.580 8-8 8zm.5-13H11v6l5.250 3.150.75-1.230-4.500-2.670z"/></svg>
<svg class="a" style="left:1111.0px;top:1041.0px" width="30" height="30" viewBox="0 0 24 24"><path fill="#4a4a4a" d="M15.500 14h-.79l-.28-.27C15.410 12.590 16 11.110 16 9.500 16 5.910 13.090 3 9.500 3S3 5.910 3 9.500 5.910 16 9.500 16c1.610 0 3.090-.59 4.230-1.570l.27.28v.79l5 4.990L20.490 19l-4.990-5zm-6 0C7.010 14 5 11.990 5 9.500S7.010 5 9.500 5 14 7.010 14 9.500 11.990 14 9.500 14z"/></svg>
<svg class="a" style="left:1152.0px;top:1043.5px" width="25" height="25" viewBox="0 0 24 24"><path fill="#4a4a4a" d="M23 5.500V20c0 2.200-1.800 4-4 4h-7.300c-1.080 0-2.100-.43-2.850-1.190L1 14.830s1.260-1.230 1.300-1.250c.22-.19.49-.29.79-.29.22 0 .42.060.6.160.4.010 4.310 2.460 4.310 2.460V4c0-.83.67-1.500 1.500-1.500S11 3.170 11 4v7h1V1.500c0-.83.670-1.500 1.500-1.500S15 .67 15 1.500V11h1V2.500c0-.83.670-1.500 1.500-1.500s1.500.67 1.500 1.500V11h1V5.500c0-.83.670-1.500 1.500-1.500s1.500.67 1.500 1.500z"/></svg>
<svg class="a" style="left:1187px;top:1042px" width="34" height="28" viewBox="1187 1042 34 28"><ellipse cx="1204" cy="1055.300" rx="14" ry="7" fill="none" stroke="#4a4a4a" stroke-width="1.600"/><circle cx="1204.500" cy="1055.500" r="4.400" fill="#4a4a4a"/><path d="M1194.500 1047.800L1199.500 1050.500 1194.300 1052.200M1213.300 1058.500L1208.500 1060.300 1213.600 1062.900" fill="none" stroke="#4a4a4a" stroke-width="1.500"/></svg>
<svg class="a" style="left:1109px;top:1074px" width="34" height="34" viewBox="1109 1074 34 34"><path d="M1112 1082.500V1077H1117.500M1134.500 1077H1140V1082.500M1140 1099.500V1105H1134.500M1117.500 1105H1112V1099.500" fill="none" stroke="#4a4a4a" stroke-width="1.300"/><path d="M1116.300 1084.600L1126.300 1080 1137 1084.600V1097.600L1126.500 1103 1116.300 1097.600z" fill="#4a4a4a"/><path d="M1118.300 1086.200L1126.500 1090.200 1135 1086.200M1126.500 1090.200V1100.500" fill="none" stroke="#ececec" stroke-width="1.500"/></svg>
<svg class="a" style="left:1150px;top:1074px" width="34" height="34" viewBox="1150 1074 34 34"><path d="M1155 1079.500L1176.500 1091 1155 1102.500M1167.200 1086.200Q1162.400 1091 1167.200 1096" fill="none" stroke="#4a4a4a" stroke-width="1.700" stroke-linejoin="round"/></svg>
<div class="a" style="left:1187px;top:1074px;width:35px;height:34px;background:#d0d0d0;border-radius:5px 5px 0 0"></div>
<svg class="a" style="left:1187.0px;top:1074.0px" width="34" height="34" viewBox="0 0 24 24"><path fill="#4a4a4a" d="M15 3l2.300 2.300-2.890 2.870 1.420 1.420L18.700 6.700 21 9V3zM3 9l2.300-2.300 2.870 2.890 1.420-1.420L6.700 5.300 9 3H3zm6 12l-2.300-2.300 2.890-2.870-1.420-1.420L5.300 17.300 3 15v6zm12-6l-2.300 2.300-2.870-2.890-1.420 1.420 2.890 2.870L15 21h6z"/></svg><div class="a" style="left:0;top:0;width:9px;height:9px;background:radial-gradient(circle at 100% 100%,transparent 8.5px,#000 9.5px)"></div><div class="a" style="right:0;top:0;width:9px;height:9px;background:radial-gradient(circle at 0 100%,transparent 8.5px,#000 9.5px)"></div><div class="a" style="left:0;bottom:0;width:9px;height:9px;background:radial-gradient(circle at 100% 0,transparent 8.5px,#000 9.5px)"></div><div class="a" style="right:0;bottom:0;width:9px;height:9px;background:radial-gradient(circle at 0 0,transparent 8.5px,#000 9.5px)"></div></div>
</body></html>
